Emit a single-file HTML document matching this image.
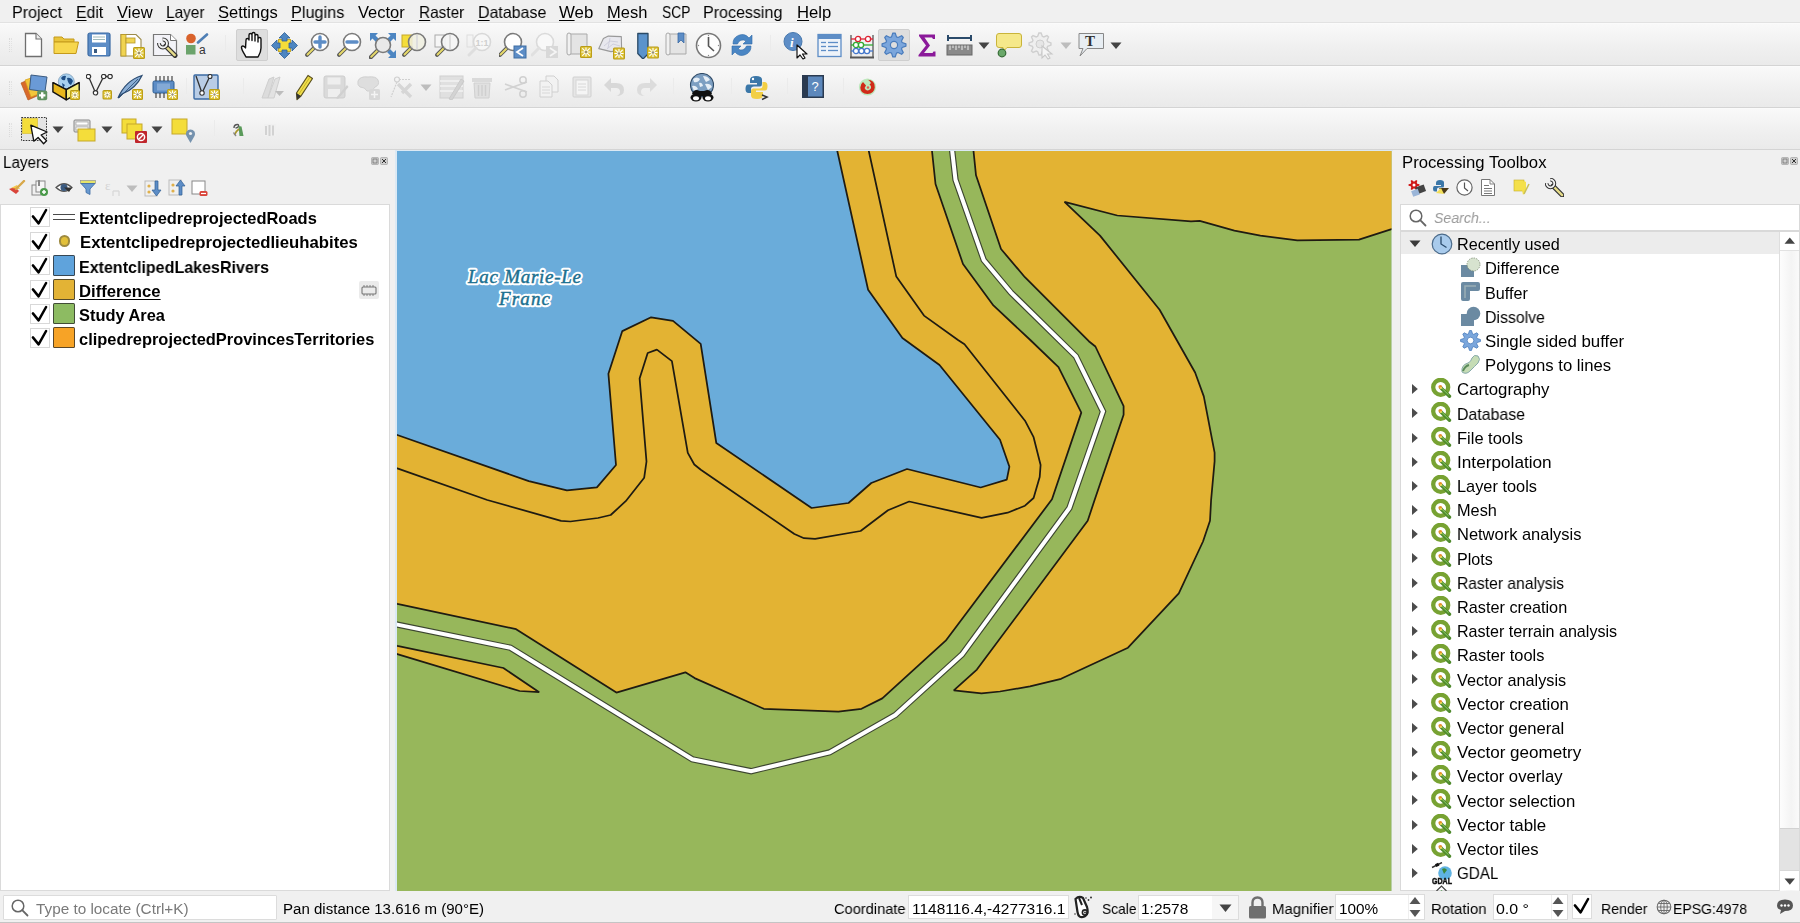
<!DOCTYPE html><html><head><meta charset="utf-8"><style>
html,body{margin:0;padding:0}
body{width:1800px;height:923px;overflow:hidden;position:relative;background:#f0f0f0;font-family:'Liberation Sans',sans-serif;}
div{box-sizing:border-box}
u{text-decoration:underline;text-underline-offset:2px;text-decoration-thickness:1px}
</style></head><body>
<div style="position:absolute;left:0px;top:0px;width:1800px;height:23px;background:#f0f0f0;border-bottom:1px solid #e2e2e2"></div>
<div style="position:absolute;left:11.7px;top:3.93px;font-size:16.5px;line-height:16.5px;color:#000;font-weight:normal;white-space:nowrap;will-change:transform;transform:scaleX(0.9735);transform-origin:0 0;">Project</div>
<div style="position:absolute;left:76px;top:3.93px;font-size:16.5px;line-height:16.5px;color:#000;font-weight:normal;white-space:nowrap;will-change:transform;transform:scaleX(0.9595);transform-origin:0 0;"><u>E</u>dit</div>
<div style="position:absolute;left:116.7px;top:3.93px;font-size:16.5px;line-height:16.5px;color:#000;font-weight:normal;white-space:nowrap;will-change:transform;transform:scaleX(1.0033);transform-origin:0 0;"><u>V</u>iew</div>
<div style="position:absolute;left:165.7px;top:3.93px;font-size:16.5px;line-height:16.5px;color:#000;font-weight:normal;white-space:nowrap;will-change:transform;transform:scaleX(0.9347);transform-origin:0 0;"><u>L</u>ayer</div>
<div style="position:absolute;left:217.7px;top:3.93px;font-size:16.5px;line-height:16.5px;color:#000;font-weight:normal;white-space:nowrap;will-change:transform;transform:scaleX(0.9993);transform-origin:0 0;"><u>S</u>ettings</div>
<div style="position:absolute;left:291px;top:3.93px;font-size:16.5px;line-height:16.5px;color:#000;font-weight:normal;white-space:nowrap;will-change:transform;transform:scaleX(0.9845);transform-origin:0 0;"><u>P</u>lugins</div>
<div style="position:absolute;left:358.3px;top:3.93px;font-size:16.5px;line-height:16.5px;color:#000;font-weight:normal;white-space:nowrap;will-change:transform;transform:scaleX(0.9979);transform-origin:0 0;">Vect<u>o</u>r</div>
<div style="position:absolute;left:419px;top:3.93px;font-size:16.5px;line-height:16.5px;color:#000;font-weight:normal;white-space:nowrap;will-change:transform;transform:scaleX(0.9319);transform-origin:0 0;"><u>R</u>aster</div>
<div style="position:absolute;left:477.7px;top:3.93px;font-size:16.5px;line-height:16.5px;color:#000;font-weight:normal;white-space:nowrap;will-change:transform;transform:scaleX(0.9669);transform-origin:0 0;"><u>D</u>atabase</div>
<div style="position:absolute;left:559px;top:3.93px;font-size:16.5px;line-height:16.5px;color:#000;font-weight:normal;white-space:nowrap;will-change:transform;transform:scaleX(1.0196);transform-origin:0 0;"><u>W</u>eb</div>
<div style="position:absolute;left:607.3px;top:3.93px;font-size:16.5px;line-height:16.5px;color:#000;font-weight:normal;white-space:nowrap;will-change:transform;transform:scaleX(0.9911);transform-origin:0 0;"><u>M</u>esh</div>
<div style="position:absolute;left:661.7px;top:3.93px;font-size:16.5px;line-height:16.5px;color:#000;font-weight:normal;white-space:nowrap;will-change:transform;transform:scaleX(0.8339);transform-origin:0 0;">SCP</div>
<div style="position:absolute;left:703.3px;top:3.93px;font-size:16.5px;line-height:16.5px;color:#000;font-weight:normal;white-space:nowrap;will-change:transform;transform:scaleX(0.9726);transform-origin:0 0;">Pro<u>c</u>essing</div>
<div style="position:absolute;left:796.7px;top:3.93px;font-size:16.5px;line-height:16.5px;color:#000;font-weight:normal;white-space:nowrap;will-change:transform;transform:scaleX(1.0102);transform-origin:0 0;"><u>H</u>elp</div>
<div style="position:absolute;left:0px;top:23px;width:1800px;height:43px;background:linear-gradient(#f9f9f9,#efefef 60%,#eaeaea);border-bottom:1px solid #d4d4d4;border-top:1px solid #fbfbfb"></div>
<div style="position:absolute;left:0px;top:66px;width:1800px;height:42px;background:linear-gradient(#f9f9f9,#efefef 60%,#eaeaea);border-bottom:1px solid #d4d4d4;border-top:1px solid #fbfbfb"></div>
<div style="position:absolute;left:0px;top:108px;width:1800px;height:42px;background:linear-gradient(#f9f9f9,#efefef 60%,#eaeaea);border-bottom:1px solid #d4d4d4;border-top:1px solid #fbfbfb"></div>
<div style="position:absolute;left:9px;top:38px;width:3px;height:14px;border-left:1px dotted #dadada;border-right:1px dotted #e2e2e2"></div>
<div style="position:absolute;left:9px;top:81px;width:3px;height:14px;border-left:1px dotted #dadada;border-right:1px dotted #e2e2e2"></div>
<div style="position:absolute;left:9px;top:123px;width:3px;height:14px;border-left:1px dotted #dadada;border-right:1px dotted #e2e2e2"></div>
<div style="position:absolute;left:236px;top:29px;width:32px;height:32px;background:#dedede;border:1px solid #cfcfcf;border-radius:2px"></div>
<div style="position:absolute;left:878px;top:29px;width:32px;height:32px;background:#dedede;border:1px solid #cfcfcf;border-radius:2px"></div>
<div style="position:absolute;left:24px;top:32px;line-height:0"><svg width="19" height="26" viewBox="0 0 19 26"><path d="M1.5 1.5 H12 L17.5 7 V24.5 H1.5 Z" fill="#fff" stroke="#6f6f6f" stroke-width="1.3"/><path d="M12 1.5 V7 H17.5" fill="#eee" stroke="#6f6f6f" stroke-width="1.1"/></svg></div>
<div style="position:absolute;left:53px;top:34px;line-height:0"><svg width="27" height="21" viewBox="0 0 27 21"><path d="M1 3 H9 L11 5 H21 V8 H1 Z" fill="#e9c43a" stroke="#c49a1c" stroke-width="1"/><path d="M1 8 H25.5 L23 19.5 H1 Z" fill="#f7d74e" stroke="#c49a1c" stroke-width="1"/></svg></div>
<div style="position:absolute;left:87px;top:32px;line-height:0"><svg width="24" height="25" viewBox="0 0 24 25"><rect x="1" y="1" width="22" height="23" rx="2" fill="#5d8dc6" stroke="#3a6aa3" stroke-width="1.2"/><rect x="5" y="2.5" width="14" height="8" fill="#fff"/><g stroke="#8aa" stroke-width="0.8"><line x1="6" y1="5" x2="18" y2="5"/><line x1="6" y1="7.5" x2="18" y2="7.5"/></g><rect x="5" y="15" width="14" height="8" fill="#fff"/><rect x="7" y="17" width="3" height="4" fill="#3a5a80"/></svg></div>
<div style="position:absolute;left:119px;top:33px;line-height:0"><svg width="27" height="26" viewBox="0 0 27 26"><path d="M2 1.5 H17 L22 6.5 V23 H2 Z" fill="#fff" stroke="#9c8b4a" stroke-width="1.1"/><rect x="2" y="1.5" width="5" height="21.5" fill="#f0d452" stroke="#b5962a" stroke-width="0.8"/><rect x="7" y="5" width="9" height="5" fill="#f0d452" stroke="#b5962a" stroke-width="0.8"/><rect x="14" y="14" width="12" height="12" rx="1.5" fill="#b89b18"/><rect x="14.9" y="14.9" width="10.2" height="10.2" rx="1" fill="#dcc236"/><g stroke="#fff" stroke-width="1.15" stroke-linecap="round"><line x1="20.0" y1="15.9" x2="20.0" y2="24.1"/><line x1="15.9" y1="20.0" x2="24.1" y2="20.0"/><line x1="16.6" y1="16.6" x2="23.400000000000002" y2="23.400000000000002"/><line x1="23.400000000000002" y1="16.6" x2="16.6" y2="23.400000000000002"/></g><circle cx="20.0" cy="20.0" r="1.32" fill="#9a9070"/></svg></div>
<div style="position:absolute;left:152px;top:33px;line-height:0"><svg width="27" height="25" viewBox="0 0 27 25"><path d="M1.5 1.5 H18.5 L24.5 7.5 V22.5 H1.5 Z" fill="#f3f3f8" stroke="#777" stroke-width="1.2"/><path d="M18.5 1.5 V7.5 H24.5" fill="#fff" stroke="#777" stroke-width="1"/><g transform="translate(11 10.5) scale(1.05)"><path d="M2.5 2.5 L11.5 11.5" stroke="#333" stroke-width="4.6" stroke-linecap="round"/><path d="M3.2 3.2 L11.1 11.1" stroke="#e6dc8a" stroke-width="2.4" stroke-linecap="round"/><path d="M-0.33 -3.79 A3.8 3.8 0 1 1 -3.79 -0.33" fill="none" stroke="#333" stroke-width="3.8"/><path d="M-0.33 -3.79 A3.8 3.8 0 1 1 -3.79 -0.33" fill="none" stroke="#f4f4f4" stroke-width="1.8"/></g></svg></div>
<div style="position:absolute;left:185px;top:33px;line-height:0"><svg width="24" height="22" viewBox="0 0 24 22"><circle cx="6" cy="5.5" r="4.8" fill="#d9622b"/><line x1="13" y1="9.5" x2="22" y2="1.5" stroke="#4f7fb5" stroke-width="2.6" stroke-linecap="round"/><rect x="1" y="12" width="9.5" height="9.5" fill="#6ba36b"/><text x="14" y="21" font-family="Liberation Sans" font-size="12" fill="#333">a</text></svg></div>
<div style="position:absolute;left:240px;top:31px;line-height:0"><svg width="24" height="28" viewBox="0 0 24 28"><path d="M6 26 C4 22 1.5 19 1.5 16.5 C1.5 14.5 4 14.5 5.5 17 L6 9 C6 7 9 7 9 9 V4 C9 2 12 2 12 4 V9.5 V3 C12 1 15 1 15 3 V10 V5 C15 3 18 3 18 5 V11 V8 C18 6 21 6 21 8 V17 C21 21 19 24 18 26 Z" fill="#fff" stroke="#111" stroke-width="1.4" stroke-linejoin="round"/></svg></div>
<div style="position:absolute;left:271px;top:32px;line-height:0"><svg width="27" height="27" viewBox="0 0 27 27"><rect x="7.5" y="7.5" width="12" height="12" fill="#f4dd3a" stroke="#c5a82a"/><g fill="#4d86c2" stroke="#2f5f94" stroke-width="0.8"><path d="M13.5 0.5 L19 6 H16 V9 H11 V6 H8 Z"/><path d="M13.5 26.5 L19 21 H16 V18 H11 V21 H8 Z"/><path d="M0.5 13.5 L6 8 V11 H9 V16 H6 V19 Z"/><path d="M26.5 13.5 L21 8 V11 H18 V16 H21 V19 Z"/></g></svg></div>
<div style="position:absolute;left:304px;top:32px;line-height:0"><svg width="27" height="27" viewBox="0 0 27 27"><line x1="10.05" y1="15.95" x2="3.0500000000000007" y2="22.95" stroke="#555" stroke-width="4" stroke-linecap="round"/><line x1="10.05" y1="15.95" x2="3.5500000000000007" y2="22.45" stroke="#e6d96a" stroke-width="2" stroke-linecap="round"/><circle cx="16" cy="10" r="8.5" fill="#fff" stroke="#7a7a7a" stroke-width="1.6"/><path d="M16 5 V15 M11 10 H21" stroke="#5d8dc6" stroke-width="3.4" stroke-linecap="round"/></svg></div>
<div style="position:absolute;left:336px;top:32px;line-height:0"><svg width="27" height="27" viewBox="0 0 27 27"><line x1="10.05" y1="15.95" x2="3.0500000000000007" y2="22.95" stroke="#555" stroke-width="4" stroke-linecap="round"/><line x1="10.05" y1="15.95" x2="3.5500000000000007" y2="22.45" stroke="#e6d96a" stroke-width="2" stroke-linecap="round"/><circle cx="16" cy="10" r="8.5" fill="#fff" stroke="#7a7a7a" stroke-width="1.6"/><path d="M11 10 H21" stroke="#5d8dc6" stroke-width="3.4" stroke-linecap="round"/></svg></div>
<div style="position:absolute;left:369px;top:32px;line-height:0"><svg width="28" height="27" viewBox="0 0 28 27"><g fill="#4d86c2"><path d="M1 1 H9 L6.5 3.5 L10 7 L7 10 L3.5 6.5 L1 9 Z"/><path d="M27 1 V9 L24.5 6.5 L21 10 L18 7 L21.5 3.5 L19 1 Z"/><path d="M27 26 H19 L21.5 23.5 L18 20 L21 17 L24.5 20.5 L27 18 Z"/></g><line x1="8.75" y1="18.25" x2="1.75" y2="25.25" stroke="#555" stroke-width="4" stroke-linecap="round"/><line x1="8.75" y1="18.25" x2="2.25" y2="24.75" stroke="#e6d96a" stroke-width="2" stroke-linecap="round"/><circle cx="14" cy="13" r="7.5" fill="#e9e9e9" stroke="#7a7a7a" stroke-width="1.6"/></svg></div>
<div style="position:absolute;left:401px;top:32px;line-height:0"><svg width="28" height="27" viewBox="0 0 28 27"><rect x="1" y="3" width="10" height="12" fill="#f4dd3a" stroke="#c5a82a"/><line x1="10.05" y1="15.95" x2="3.0500000000000007" y2="22.95" stroke="#555" stroke-width="4" stroke-linecap="round"/><line x1="10.05" y1="15.95" x2="3.5500000000000007" y2="22.45" stroke="#e6d96a" stroke-width="2" stroke-linecap="round"/><circle cx="16" cy="10" r="8.5" fill="rgba(240,240,225,0.85)" stroke="#7a7a7a" stroke-width="1.6"/><line x1="16" y1="3" x2="16" y2="17" stroke="#ddd" stroke-width="2"/></svg></div>
<div style="position:absolute;left:434px;top:32px;line-height:0"><svg width="28" height="27" viewBox="0 0 28 27"><rect x="1" y="3" width="10" height="12" fill="#f6f6f6" stroke="#aaa"/><line x1="10.05" y1="15.95" x2="3.0500000000000007" y2="22.95" stroke="#555" stroke-width="4" stroke-linecap="round"/><line x1="10.05" y1="15.95" x2="3.5500000000000007" y2="22.45" stroke="#e6d96a" stroke-width="2" stroke-linecap="round"/><circle cx="16" cy="10" r="8.5" fill="rgba(245,245,245,0.9)" stroke="#7a7a7a" stroke-width="1.6"/><line x1="16" y1="3" x2="16" y2="17" stroke="#ddd" stroke-width="2"/></svg></div>
<div style="position:absolute;left:466px;top:32px;line-height:0"><svg width="27" height="27" viewBox="0 0 27 27"><rect x="1" y="3" width="6" height="12" fill="none" stroke="#ddd"/><circle cx="16" cy="10" r="8.5" fill="#f7f7f7" stroke="#d8d8d8" stroke-width="1.6"/><line x1="10" y1="16" x2="3" y2="23" stroke="#dedede" stroke-width="3" stroke-linecap="round"/><text x="9.5" y="14" font-family="Liberation Sans" font-weight="bold" font-size="9" fill="#cfcfcf">1:1</text></svg></div>
<div style="position:absolute;left:499px;top:32px;line-height:0"><svg width="28" height="27" viewBox="0 0 28 27"><line x1="8.05" y1="15.95" x2="1.0500000000000007" y2="22.95" stroke="#555" stroke-width="4" stroke-linecap="round"/><line x1="8.05" y1="15.95" x2="1.5500000000000007" y2="22.45" stroke="#e6d96a" stroke-width="2" stroke-linecap="round"/><circle cx="14" cy="10" r="8.5" fill="#fff" stroke="#7a7a7a" stroke-width="1.6"/><rect x="15" y="14" width="12" height="12" fill="#5d8dc6" stroke="#3f6ea3"/><path d="M24 16 L18 20 L24 24" fill="none" stroke="#fff" stroke-width="1.8"/></svg></div>
<div style="position:absolute;left:531px;top:32px;line-height:0"><svg width="28" height="27" viewBox="0 0 28 27"><circle cx="14" cy="10" r="8.5" fill="#f8f8f8" stroke="#dadada" stroke-width="1.6"/><line x1="8" y1="16" x2="1" y2="23" stroke="#e0e0e0" stroke-width="3" stroke-linecap="round"/><rect x="15" y="14" width="12" height="12" fill="#d8d8d8"/><path d="M19 16 L25 20 L19 24" fill="none" stroke="#f5f5f5" stroke-width="1.8"/></svg></div>
<div style="position:absolute;left:566px;top:32px;line-height:0"><svg width="27" height="27" viewBox="0 0 27 27"><path d="M3 2 H21 V22 H3 Z" fill="#e4e4e4" stroke="#a9a9a9"/><rect x="1" y="1" width="4" height="22" rx="2" fill="#f1f1f1" stroke="#a9a9a9"/><rect x="14" y="14" width="12" height="12" rx="1.5" fill="#b89b18"/><rect x="14.9" y="14.9" width="10.2" height="10.2" rx="1" fill="#dcc236"/><g stroke="#fff" stroke-width="1.15" stroke-linecap="round"><line x1="20.0" y1="15.9" x2="20.0" y2="24.1"/><line x1="15.9" y1="20.0" x2="24.1" y2="20.0"/><line x1="16.6" y1="16.6" x2="23.400000000000002" y2="23.400000000000002"/><line x1="23.400000000000002" y1="16.6" x2="16.6" y2="23.400000000000002"/></g><circle cx="20.0" cy="20.0" r="1.32" fill="#9a9070"/></svg></div>
<div style="position:absolute;left:598px;top:33px;line-height:0"><svg width="28" height="27" viewBox="0 0 28 27"><path d="M0.8 15.6 L5.4 5.5 L10.3 3.1 L23.3 3.6 L23.6 17 L13 18.6 Z" fill="#e8e8ee" stroke="#999" stroke-width="1.1" stroke-linejoin="round"/><path d="M6 13 L12 8 L20 9 M9 16 L15 11 L22 13 M12 5 L10 15" fill="none" stroke="#c8c8d8" stroke-width="0.8"/><rect x="15" y="14.5" width="12" height="12" rx="1.5" fill="#b89b18"/><rect x="15.9" y="15.4" width="10.2" height="10.2" rx="1" fill="#dcc236"/><g stroke="#fff" stroke-width="1.15" stroke-linecap="round"><line x1="21.0" y1="16.4" x2="21.0" y2="24.6"/><line x1="16.9" y1="20.5" x2="25.1" y2="20.5"/><line x1="17.599999999999998" y1="17.099999999999998" x2="24.400000000000002" y2="23.900000000000002"/><line x1="24.400000000000002" y1="17.099999999999998" x2="17.599999999999998" y2="23.900000000000002"/></g><circle cx="21.0" cy="20.5" r="1.32" fill="#9a9070"/></svg></div>
<div style="position:absolute;left:636px;top:32px;line-height:0"><svg width="24" height="27" viewBox="0 0 24 27"><path d="M1.8 1.5 H12 V22 L7 27 L1.8 21.5 Z" fill="#5b93cc" stroke="#2a4a66" stroke-width="1.3" stroke-linejoin="round"/><rect x="11" y="14.5" width="12" height="12" rx="1.5" fill="#b89b18"/><rect x="11.9" y="15.4" width="10.2" height="10.2" rx="1" fill="#dcc236"/><g stroke="#fff" stroke-width="1.15" stroke-linecap="round"><line x1="17.0" y1="16.4" x2="17.0" y2="24.6"/><line x1="12.9" y1="20.5" x2="21.1" y2="20.5"/><line x1="13.6" y1="17.099999999999998" x2="20.400000000000002" y2="23.900000000000002"/><line x1="20.400000000000002" y1="17.099999999999998" x2="13.6" y2="23.900000000000002"/></g><circle cx="17.0" cy="20.5" r="1.32" fill="#9a9070"/></svg></div>
<div style="position:absolute;left:665px;top:32px;line-height:0"><svg width="24" height="25" viewBox="0 0 24 25"><path d="M3 2 H21 V22 H3 Z" fill="#e4e4e4" stroke="#a9a9a9"/><rect x="1" y="1" width="4" height="22" rx="2" fill="#f1f1f1" stroke="#a9a9a9"/><path d="M13 1 H19 V11 L16 8 L13 11 Z" fill="#5d8dc6" stroke="#3a6aa3" stroke-width="0.8"/></svg></div>
<div style="position:absolute;left:695px;top:32px;line-height:0"><svg width="27" height="27" viewBox="0 0 27 27"><circle cx="13.5" cy="13.5" r="12" fill="#fdfdfd" stroke="#777" stroke-width="1.6"/><path d="M13.5 5 V14 L19 19" fill="none" stroke="#555" stroke-width="1.6"/><g fill="#888"><circle cx="13.5" cy="3.5" r="0.7"/><circle cx="13.5" cy="23.5" r="0.7"/><circle cx="3.5" cy="13.5" r="0.7"/><circle cx="23.5" cy="13.5" r="0.7"/></g></svg></div>
<div style="position:absolute;left:729px;top:32px;line-height:0"><svg width="26" height="26" viewBox="0 0 26 26"><path d="M4 12 A9 9 0 0 1 20 6 L23 3 V12 H14 L17 9 A5.5 5.5 0 0 0 8.5 12 Z" fill="#4a86c4" stroke="#2f6aa8" stroke-width="0.6"/><path d="M22 14 A9 9 0 0 1 6 20 L3 23 V14 H12 L9 17 A5.5 5.5 0 0 0 17.5 14 Z" fill="#4a86c4" stroke="#2f6aa8" stroke-width="0.6"/></svg></div>
<div style="position:absolute;left:783px;top:32px;line-height:0"><svg width="28" height="28" viewBox="0 0 28 28"><circle cx="10" cy="9.5" r="9" fill="#5d8dc6" stroke="#4677ad" stroke-width="1"/><text x="7" y="15" font-family="Liberation Serif" font-style="italic" font-weight="bold" font-size="13" fill="#fff">i</text><path d="M14 13 L14 26 L17 23 L20 27 L22 26 L19.5 22 L24 22 Z" fill="#fff" stroke="#111" stroke-width="1.2" stroke-linejoin="round"/></svg></div>
<div style="position:absolute;left:817px;top:33px;line-height:0"><svg width="26" height="25" viewBox="0 0 26 25"><rect x="1" y="1.5" width="23" height="22" fill="#eef3f9" stroke="#5d8dc6" stroke-width="1.3"/><rect x="1" y="1.5" width="23" height="4.5" fill="#5d8dc6"/><g stroke="#5d8dc6" stroke-width="1.3"><line x1="4" y1="9.5" x2="9" y2="9.5"/><line x1="11" y1="9.5" x2="21" y2="9.5"/><line x1="4" y1="13.5" x2="9" y2="13.5"/><line x1="11" y1="13.5" x2="21" y2="13.5"/><line x1="4" y1="17.5" x2="9" y2="17.5"/><line x1="11" y1="17.5" x2="21" y2="17.5"/></g></svg></div>
<div style="position:absolute;left:849px;top:33px;line-height:0"><svg width="26" height="26" viewBox="0 0 26 26"><g stroke="#555" stroke-width="1.3" fill="none"><line x1="2" y1="2" x2="2" y2="24"/><line x1="24" y1="2" x2="24" y2="24"/><line x1="1" y1="24.5" x2="25" y2="24.5" stroke-width="2"/></g><g stroke-width="1.3" fill="#fff"><line x1="2" y1="6" x2="24" y2="6" stroke="#d23"/><circle cx="9" cy="6" r="2.6" stroke="#d23"/><circle cx="19" cy="6" r="2.6" stroke="#d23"/><line x1="2" y1="12" x2="24" y2="12" stroke="#3a3"/><circle cx="7" cy="12" r="2.6" stroke="#3a3"/><circle cx="12" cy="12" r="2.6" stroke="#3a3"/><line x1="2" y1="18" x2="24" y2="18" stroke="#47c"/><circle cx="7" cy="18" r="2.6" stroke="#47c"/><circle cx="12.5" cy="18" r="2.6" stroke="#47c"/><circle cx="18" cy="18" r="2.6" stroke="#47c"/></g></svg></div>
<div style="position:absolute;left:881px;top:32px;line-height:0"><svg width="26" height="26" viewBox="0 0 26 26"><path d="M24.94 11.82 L24.94 14.18 L21.13 15.47 L20.50 17.01 L22.28 20.61 L20.61 22.28 L17.01 20.50 L15.47 21.13 L14.18 24.94 L11.82 24.94 L10.53 21.13 L8.99 20.50 L5.39 22.28 L3.72 20.61 L5.50 17.01 L4.87 15.47 L1.06 14.18 L1.06 11.82 L4.87 10.53 L5.50 8.99 L3.72 5.39 L5.39 3.72 L8.99 5.50 L10.53 4.87 L11.82 1.06 L14.18 1.06 L15.47 4.87 L17.01 5.50 L20.61 3.72 L22.28 5.39 L20.50 8.99 L21.13 10.53 Z" fill="#7ba6dc" stroke="#4a7cbc" stroke-width="1.2" stroke-linejoin="round"/><circle cx="13" cy="13" r="3.6" fill="#dedede" stroke="#4a7cbc" stroke-width="1.2"/></svg></div>
<div style="position:absolute;left:917px;top:33px;line-height:0"><svg width="20" height="25" viewBox="0 0 20 25"><path d="M2 1.5 H18 V6 H16 L15 4.5 H7.5 L13 12.5 L7 20 H15.5 L16.5 18.5 H18.5 V23.5 H1.5 V22 L9 12.5 L2 3 Z" fill="#8b1a9a"/></svg></div>
<div style="position:absolute;left:946px;top:33px;line-height:0"><svg width="27" height="25" viewBox="0 0 27 25"><rect x="1" y="12" width="25" height="10" fill="#8a8a8a" stroke="#666"/><g stroke="#eee" stroke-width="1"><line x1="4" y1="12.5" x2="4" y2="17"/><line x1="7" y1="12.5" x2="7" y2="15"/><line x1="10" y1="12.5" x2="10" y2="17"/><line x1="13" y1="12.5" x2="13" y2="15"/><line x1="16" y1="12.5" x2="16" y2="17"/><line x1="19" y1="12.5" x2="19" y2="15"/><line x1="22" y1="12.5" x2="22" y2="17"/></g><path d="M2 2 V8 M25 2 V8 M2 5 H25" stroke="#2a4a6a" stroke-width="2"/></svg></div>
<div style="position:absolute;left:978px;top:42px;line-height:0"><svg width="12" height="8" viewBox="0 0 12 8"><path d="M0.5 0.5 H11.5 L6 7 Z" fill="#444"/></svg></div>
<div style="position:absolute;left:996px;top:32px;line-height:0"><svg width="27" height="27" viewBox="0 0 27 27"><path d="M3 1.5 H23 Q25.5 1.5 25.5 4 V13 Q25.5 15.5 23 15.5 H11 L7 20 V15.5 H3 Q0.5 15.5 0.5 13 V4 Q0.5 1.5 3 1.5 Z" fill="#f5e88a" stroke="#c9b43a" stroke-width="1"/><circle cx="6" cy="21" r="3.8" fill="#6aa86a" stroke="#356a35" stroke-width="1.2"/></svg></div>
<div style="position:absolute;left:1028px;top:32px;line-height:0"><svg width="28" height="28" viewBox="0 0 28 28"><path d="M22.95 10.92 L22.95 13.08 L19.66 14.32 L19.06 15.77 L20.50 18.98 L18.98 20.50 L15.77 19.06 L14.32 19.66 L13.08 22.95 L10.92 22.95 L9.68 19.66 L8.23 19.06 L5.02 20.50 L3.50 18.98 L4.94 15.77 L4.34 14.32 L1.05 13.08 L1.05 10.92 L4.34 9.68 L4.94 8.23 L3.50 5.02 L5.02 3.50 L8.23 4.94 L9.68 4.34 L10.92 1.05 L13.08 1.05 L14.32 4.34 L15.77 4.94 L18.98 3.50 L20.50 5.02 L19.06 8.23 L19.66 9.68 Z" fill="#efefef" stroke="#cfcfcf" stroke-width="1.4"/><circle cx="12" cy="12" r="4" fill="#e6e6e6" stroke="#cfcfcf"/><path d="M14 14 L14 26 L17 23 L20 27 L22 26 L19.5 22 L24 22 Z" fill="#f5f5f5" stroke="#c8c8c8" stroke-width="1.1"/></svg></div>
<div style="position:absolute;left:1060px;top:42px;line-height:0"><svg width="12" height="8" viewBox="0 0 12 8"><path d="M0.5 0.5 H11.5 L6 7 Z" fill="#bdbdbd"/></svg></div>
<div style="position:absolute;left:1078px;top:32px;line-height:0"><svg width="27" height="27" viewBox="0 0 27 27"><path d="M1 1.5 H25.5 V16.5 H9 L2 24 L5 16.5 H1 Z" fill="#e8eef3" stroke="#888" stroke-width="1"/><text x="7" y="14" font-family="Liberation Serif" font-weight="bold" font-size="15" fill="#333">T</text></svg></div>
<div style="position:absolute;left:1110px;top:42px;line-height:0"><svg width="12" height="8" viewBox="0 0 12 8"><path d="M0.5 0.5 H11.5 L6 7 Z" fill="#444"/></svg></div>
<div style="position:absolute;left:20px;top:74px;line-height:0"><svg width="29" height="27" viewBox="0 0 29 27"><path d="M1 9 L10 5 L17 22 L8 26 Z" fill="#d8692a" stroke="#b55a20" stroke-width="0.7"/><path d="M5 6 L14 3 L21 19 L11 23 Z" fill="#f3c63a" stroke="#d6a21c" stroke-width="0.7"/><path d="M11 1 L27 3 L25 17.5 L9.5 15.5 Z" fill="#6a9ad6" stroke="#3a5a80" stroke-width="1"/><rect x="17.2" y="16.5" width="10" height="9.8" rx="1.8" fill="#5f9360"/><path d="M22.2 18.3 V24.5 M19 21.4 H25.4" stroke="#fff" stroke-width="2.4"/></svg></div>
<div style="position:absolute;left:52px;top:73px;line-height:0"><svg width="29" height="28" viewBox="0 0 29 28"><circle cx="14.3" cy="8.8" r="8" fill="#a8d0ee" stroke="#6a8aa8" stroke-width="0.6"/><path d="M9 5 Q11 2 14 3 L13 7 Q10 8 9 5 Z M15 5 Q19 4 21 8 L19 12 Q16 11 15 5 Z M10 10 L13 12 L11 15 Z" fill="#1f4f86"/><path d="M0.9 9.6 L14.3 16.6 L27.2 9.6" fill="none" stroke="#111" stroke-width="1.4" stroke-linejoin="round"/><path d="M0.9 9.6 L14.3 16.6 V26.8 L0.9 18.9 Z" fill="#e8b71c" stroke="#111" stroke-width="1.4" stroke-linejoin="round"/><path d="M14.3 16.6 L27.2 9.6 V19.5 L14.3 26.8 Z" fill="#f6ec7a" stroke="#111" stroke-width="1.4" stroke-linejoin="round"/><rect x="18" y="17" width="10" height="10" rx="1.5" fill="#b89b18"/><rect x="18.9" y="17.9" width="8.2" height="8.2" rx="1" fill="#dcc236"/><g stroke="#fff" stroke-width="1.15" stroke-linecap="round"><line x1="23.0" y1="18.9" x2="23.0" y2="25.1"/><line x1="19.9" y1="22.0" x2="26.1" y2="22.0"/><line x1="20.599999999999998" y1="19.599999999999998" x2="25.400000000000002" y2="24.400000000000002"/><line x1="25.400000000000002" y1="19.599999999999998" x2="20.599999999999998" y2="24.400000000000002"/></g><circle cx="23.0" cy="22.0" r="1.1" fill="#9a9070"/></svg></div>
<div style="position:absolute;left:86px;top:74px;line-height:0"><svg width="27" height="26" viewBox="0 0 27 26"><path d="M2.5 2.5 L9.5 18.8 L17.7 2.5 H24.1" fill="none" stroke="#333" stroke-width="1.3"/><g fill="#fff" stroke="#333" stroke-width="1.2"><circle cx="2.5" cy="2.5" r="2.2"/><circle cx="9.5" cy="18.8" r="2.2"/><circle cx="17.7" cy="2.5" r="2.2"/><circle cx="24.1" cy="2.5" r="2.2"/></g><rect x="16.5" y="16" width="9.5" height="9.5" rx="1.5" fill="#b89b18"/><rect x="17.4" y="16.9" width="7.7" height="7.7" rx="1" fill="#dcc236"/><g stroke="#fff" stroke-width="1.15" stroke-linecap="round"><line x1="21.25" y1="17.9" x2="21.25" y2="23.6"/><line x1="18.4" y1="20.75" x2="24.1" y2="20.75"/><line x1="19.099999999999998" y1="18.599999999999998" x2="23.400000000000002" y2="22.900000000000002"/><line x1="23.400000000000002" y1="18.599999999999998" x2="19.099999999999998" y2="22.900000000000002"/></g><circle cx="21.25" cy="20.75" r="1.045" fill="#9a9070"/></svg></div>
<div style="position:absolute;left:117px;top:74px;line-height:0"><svg width="27" height="26" viewBox="0 0 27 26"><path d="M1 24 C6 12 14 5 25 1.5 C22 8 16 16 5 20 Z" fill="#8aaed6" stroke="#2a4a70" stroke-width="1.2"/><path d="M2 24 L21 5" stroke="#2a4a70" stroke-width="0.8"/><rect x="15" y="15" width="11" height="11" rx="1.5" fill="#b89b18"/><rect x="15.9" y="15.9" width="9.2" height="9.2" rx="1" fill="#dcc236"/><g stroke="#fff" stroke-width="1.15" stroke-linecap="round"><line x1="20.5" y1="16.9" x2="20.5" y2="24.1"/><line x1="16.9" y1="20.5" x2="24.1" y2="20.5"/><line x1="17.599999999999998" y1="17.599999999999998" x2="23.400000000000002" y2="23.400000000000002"/><line x1="23.400000000000002" y1="17.599999999999998" x2="17.599999999999998" y2="23.400000000000002"/></g><circle cx="20.5" cy="20.5" r="1.21" fill="#9a9070"/></svg></div>
<div style="position:absolute;left:152px;top:75px;line-height:0"><svg width="27" height="25" viewBox="0 0 27 25"><rect x="1" y="6" width="21" height="12" rx="1.5" fill="#5d8dc6" stroke="#2f5f94"/><rect x="5" y="8.5" width="13" height="7" fill="#83a9d6"/><g stroke="#333" stroke-width="1.1"><path d="M4 1 V6 M8 1 V6 M12 1 V6 M16 1 V6 M20 1 V6 M4 18 V23 M8 18 V23 M12 18 V23"/></g><rect x="15" y="14" width="11" height="11" rx="1.5" fill="#b89b18"/><rect x="15.9" y="14.9" width="9.2" height="9.2" rx="1" fill="#dcc236"/><g stroke="#fff" stroke-width="1.15" stroke-linecap="round"><line x1="20.5" y1="15.9" x2="20.5" y2="23.1"/><line x1="16.9" y1="19.5" x2="24.1" y2="19.5"/><line x1="17.599999999999998" y1="16.6" x2="23.400000000000002" y2="22.400000000000002"/><line x1="23.400000000000002" y1="16.6" x2="17.599999999999998" y2="22.400000000000002"/></g><circle cx="20.5" cy="19.5" r="1.21" fill="#9a9070"/></svg></div>
<div style="position:absolute;left:193px;top:74px;line-height:0"><svg width="28" height="27" viewBox="0 0 28 27"><rect x="1" y="1" width="24" height="24" rx="1" fill="#b9cde6" stroke="#3a6aa3" stroke-width="1.4"/><path d="M3 2 L9 19 L17 2" fill="none" stroke="#333" stroke-width="1.3"/><g fill="#fff" stroke="#333" stroke-width="1.1"><circle cx="9" cy="19" r="2.2"/><circle cx="17" cy="2.5" r="2"/></g><rect x="16" y="15" width="11" height="11" rx="1.5" fill="#b89b18"/><rect x="16.9" y="15.9" width="9.2" height="9.2" rx="1" fill="#dcc236"/><g stroke="#fff" stroke-width="1.15" stroke-linecap="round"><line x1="21.5" y1="16.9" x2="21.5" y2="24.1"/><line x1="17.9" y1="20.5" x2="25.1" y2="20.5"/><line x1="18.599999999999998" y1="17.599999999999998" x2="24.400000000000002" y2="23.400000000000002"/><line x1="24.400000000000002" y1="17.599999999999998" x2="18.599999999999998" y2="23.400000000000002"/></g><circle cx="21.5" cy="20.5" r="1.21" fill="#9a9070"/></svg></div>
<div style="position:absolute;left:259px;top:74px;line-height:0"><svg width="27" height="26" viewBox="0 0 27 26"><path d="M3 24 L10 5 L15 3 L9 24 Z" fill="#dcdcdc" stroke="#cfcfcf"/><path d="M9 24 L16 5 L21 3 L15 24 Z" fill="#e2e2e2" stroke="#cfcfcf"/><path d="M16 17 H25 L20.5 22 Z" fill="#bdbdbd"/></svg></div>
<div style="position:absolute;left:294px;top:74px;line-height:0"><svg width="19" height="27" viewBox="0 0 19 27"><path d="M3 25.5 L2.5 19 L14 1.5 L18.5 4.5 L7 22 Z" fill="#f0de4a" stroke="#5a5020" stroke-width="1.2" stroke-linejoin="round"/><path d="M2.5 19 L7 22 L3 25.5 Z" fill="#333"/><path d="M5 20 L16 3" stroke="#c9b42a" stroke-width="1"/></svg></div>
<div style="position:absolute;left:323px;top:75px;line-height:0"><svg width="26" height="25" viewBox="0 0 26 25"><rect x="1" y="1" width="21" height="22" rx="2" fill="#dadada" stroke="#cdcdcd"/><rect x="4.5" y="2.5" width="13" height="7" fill="#eee"/><rect x="5" y="14" width="12" height="8" fill="#eee"/><path d="M13 23 L24 10 L25.5 12 L15 24 Z" fill="#d0d0d0"/></svg></div>
<div style="position:absolute;left:356px;top:75px;line-height:0"><svg width="26" height="26" viewBox="0 0 26 26"><path d="M2 6 Q4 1 12 2 Q20 1 22 5 Q24 10 19 12 Q17 13 18 16 H11 Q9 12 4 12 Q1 10 2 6 Z" fill="#dedede" stroke="#d0d0d0"/><rect x="13" y="14" width="11" height="11" rx="1.5" fill="#d8d8d8"/><path d="M18.5 16 V23 M15 19.5 H22" stroke="#f4f4f4" stroke-width="1.5"/></svg></div>
<div style="position:absolute;left:390px;top:76px;line-height:0"><svg width="24" height="23" viewBox="0 0 24 23"><circle cx="7" cy="3.5" r="2.5" fill="none" stroke="#cfcfcf" stroke-width="1.2"/><path d="M7 6 L1 21 M9 3.5 H20" stroke="#d0d0d0" stroke-width="1.2" stroke-dasharray="2 1"/><path d="M8 8 L21 21 M21 8 L12 17" stroke="#d6d6d6" stroke-width="3.4"/></svg></div>
<div style="position:absolute;left:420px;top:84px;line-height:0"><svg width="12" height="8" viewBox="0 0 12 8"><path d="M0.5 0.5 H11.5 L6 7 Z" fill="#bdbdbd"/></svg></div>
<div style="position:absolute;left:439px;top:75px;line-height:0"><svg width="26" height="25" viewBox="0 0 26 25"><rect x="1" y="1" width="23" height="22" fill="#e0e0e0" stroke="#d0d0d0"/><g stroke="#f3f3f3" stroke-width="1.5"><line x1="1" y1="6" x2="24" y2="6"/><line x1="1" y1="11" x2="24" y2="11"/><line x1="1" y1="16" x2="24" y2="16"/></g><path d="M10 24 L22 4 L25 6 L13 25 Z" fill="#d3d3d3" stroke="#c6c6c6" stroke-width="0.8"/></svg></div>
<div style="position:absolute;left:471px;top:76px;line-height:0"><svg width="22" height="23" viewBox="0 0 22 23"><rect x="1" y="2" width="20" height="4" fill="#dadada"/><path d="M3 7 H19 L18 22 H4 Z" fill="#e0e0e0" stroke="#d0d0d0"/><path d="M7.5 9 V20 M11 9 V20 M14.5 9 V20" stroke="#cfcfcf" stroke-width="1.5"/></svg></div>
<div style="position:absolute;left:503px;top:75px;line-height:0"><svg width="26" height="24" viewBox="0 0 26 24"><path d="M2 9 L24 17 M2 15 L24 7" stroke="#d2d2d2" stroke-width="1.6"/><circle cx="20" cy="5" r="3.2" fill="none" stroke="#d0d0d0" stroke-width="1.5"/><circle cx="20" cy="19" r="3.2" fill="none" stroke="#d0d0d0" stroke-width="1.5"/></svg></div>
<div style="position:absolute;left:539px;top:75px;line-height:0"><svg width="20" height="23" viewBox="0 0 20 23"><path d="M7 1 H15 L19 5 V17 H7 Z" fill="#f2f2f2" stroke="#d0d0d0"/><path d="M1 6 H9 L13 10 V22 H1 Z" fill="#f2f2f2" stroke="#d0d0d0"/><g stroke="#d8d8d8"><line x1="3" y1="12" x2="11" y2="12"/><line x1="3" y1="15" x2="11" y2="15"/><line x1="3" y1="18" x2="11" y2="18"/></g></svg></div>
<div style="position:absolute;left:572px;top:75px;line-height:0"><svg width="20" height="23" viewBox="0 0 20 23"><rect x="1" y="2" width="18" height="20" rx="1" fill="#e6e6e6" stroke="#d0d0d0"/><rect x="4" y="5" width="12" height="15" fill="#f5f5f5" stroke="#d6d6d6"/><g stroke="#d8d8d8"><line x1="6" y1="9" x2="14" y2="9"/><line x1="6" y1="12" x2="14" y2="12"/><line x1="6" y1="15" x2="14" y2="15"/></g></svg></div>
<div style="position:absolute;left:603px;top:77px;line-height:0"><svg width="22" height="20" viewBox="0 0 22 20"><path d="M8 1 L1 8 L8 15 V11 H13 Q17 11 17 15 Q17 18 13 19 Q21 19 21 13 Q21 6 13 6 H8 Z" fill="#d8d8d8"/></svg></div>
<div style="position:absolute;left:636px;top:77px;line-height:0"><svg width="22" height="20" viewBox="0 0 22 20"><path d="M14 1 L21 8 L14 15 V11 H9 Q5 11 5 15 Q5 18 9 19 Q1 19 1 13 Q1 6 9 6 H14 Z" fill="#dcdcdc"/></svg></div>
<div style="position:absolute;left:688px;top:73px;line-height:0"><svg width="29" height="29" viewBox="0 0 29 29"><circle cx="14" cy="12" r="11.5" fill="#7d9fc2" stroke="#2f4a66" stroke-width="1.1"/><path d="M5 6 Q9 3 12 6 Q10 10 6 9 Z M15 3 Q20 3 22 7 L18 9 Q16 6 15 3 Z M4 13 Q8 12 10 16 L6 18 Z M17 11 Q22 10 24 14 L20 17 Z M11 10 Q14 9 15 13 L12 14 Z" fill="#e6eef6"/><g fill="#111"><path d="M4 21 Q5 17 9 17 L12 18 V22 Z"/><path d="M24 21 Q23 17 19 17 L16 18 V22 Z"/><ellipse cx="8" cy="24.5" rx="5.5" ry="4"/><ellipse cx="20" cy="24.5" rx="5.5" ry="4"/><rect x="11" y="18" width="6" height="5"/></g><g fill="#fff"><ellipse cx="8" cy="25.2" rx="3" ry="2"/><ellipse cx="20" cy="25.2" rx="3" ry="2"/></g></svg></div>
<div style="position:absolute;left:745px;top:75px;line-height:0"><svg width="26" height="26" viewBox="0 0 26 26"><path d="M11 1 Q5 1 5 5 V8 H12 V9.5 H3 Q0.5 9.5 0.5 14 Q0.5 18 3.5 18 H6 V14 Q6 11.5 9 11.5 H15 Q17 11.5 17 9 V4.5 Q17 1 11 1 Z" fill="#3b77a8"/><circle cx="8" cy="4" r="1.2" fill="#fff"/><path d="M12 24 Q18 24 18 20 V17 H11 V15.5 H20 Q22.5 15.5 22.5 11 Q22.5 7 19.5 7 H17.5 V11 Q17.5 13.5 14.5 13.5 H8 Q6 13.5 6 16 V20.5 Q6 24 12 24 Z" fill="#f2cf45"/><path d="M17 20 L22 22 L17 24.5" fill="none" stroke="#333" stroke-width="1.5"/></svg></div>
<div style="position:absolute;left:801px;top:74px;line-height:0"><svg width="24" height="25" viewBox="0 0 24 25"><rect x="1" y="1" width="22" height="23" fill="#2a3a50"/><rect x="7" y="2.5" width="14.5" height="20" fill="#5d88bc"/><text x="10.5" y="17" font-family="Liberation Sans" font-size="13" fill="#fff">?</text></svg></div>
<div style="position:absolute;left:858px;top:78px;line-height:0"><svg width="19" height="18" viewBox="0 0 19 18"><circle cx="9.5" cy="9" r="8.6" fill="#8fe08f" opacity="0.55"/><path d="M9.5 1.8 Q17 1.8 16.8 9.5 Q16 16 9.5 16 Q2.5 16 2.3 9.5 Q2.3 6 5 4 L8 7.5 Q6 9.5 7.5 11.5 Q10 13.5 12.5 11 Q14 8.5 11.5 6.5 L13 5 Q11 1.8 9.5 1.8 Z" fill="#d02a18"/><circle cx="10" cy="9.5" r="1.2" fill="#e85a4a"/></svg></div>
<div style="position:absolute;left:20px;top:116px;line-height:0"><svg width="30" height="30" viewBox="0 0 30 30"><rect x="1.5" y="1.5" width="25" height="23" fill="#e4e4e4" stroke="#333" stroke-width="1" stroke-dasharray="1.6 1.2"/><rect x="2.5" y="2.5" width="15" height="15" fill="#f4dd3a" stroke="#d6b92a" stroke-width="0.6"/><path d="M10.8 9.2 L13.8 25.2 L18.1 21.5 L23.6 27.7 L26.6 24.7 L21.1 19.0 L27.1 16.0 Z" fill="#fff" stroke="#111" stroke-width="1.3" stroke-linejoin="round"/></svg></div>
<div style="position:absolute;left:52px;top:126px;line-height:0"><svg width="12" height="8" viewBox="0 0 12 8"><path d="M0.5 0.5 H11.5 L6 7 Z" fill="#444"/></svg></div>
<div style="position:absolute;left:73px;top:119px;line-height:0"><svg width="23" height="23" viewBox="0 0 23 23"><rect x="1" y="1" width="16" height="12" rx="1" fill="#dcdcdc" stroke="#888"/><rect x="3" y="3" width="12" height="3" fill="#fff" stroke="#999" stroke-width="0.6"/><rect x="3" y="8" width="12" height="3" fill="#fff" stroke="#999" stroke-width="0.6"/><rect x="5" y="10" width="17" height="12" fill="#f4dd3a" stroke="#c5a82a"/></svg></div>
<div style="position:absolute;left:101px;top:126px;line-height:0"><svg width="12" height="8" viewBox="0 0 12 8"><path d="M0.5 0.5 H11.5 L6 7 Z" fill="#444"/></svg></div>
<div style="position:absolute;left:121px;top:118px;line-height:0"><svg width="27" height="26" viewBox="0 0 27 26"><rect x="1" y="1" width="14" height="14" fill="#f4dd3a" stroke="#c5a82a"/><rect x="6" y="6" width="15" height="15" fill="#f4dd3a" stroke="#c5a82a"/><rect x="14" y="13" width="12" height="12" rx="1" fill="#c0262c"/><circle cx="20" cy="19" r="3.6" fill="none" stroke="#fff" stroke-width="1.5"/><line x1="17.5" y1="21.5" x2="22.5" y2="16.5" stroke="#fff" stroke-width="1.5"/></svg></div>
<div style="position:absolute;left:151px;top:126px;line-height:0"><svg width="12" height="8" viewBox="0 0 12 8"><path d="M0.5 0.5 H11.5 L6 7 Z" fill="#444"/></svg></div>
<div style="position:absolute;left:171px;top:118px;line-height:0"><svg width="25" height="26" viewBox="0 0 25 26"><rect x="1" y="1" width="15" height="15" fill="#f4dd3a" stroke="#c5a82a"/><path d="M19.5 25 L15.5 18 A4.5 4.5 0 1 1 23.5 18 Z" fill="#7592ae"/><circle cx="19.5" cy="15.5" r="1.6" fill="#f0f0f0"/></svg></div>
<div style="position:absolute;left:231.5px;top:122.5px;line-height:0"><svg width="13" height="14" viewBox="0 0 13 14"><path d="M2 5 Q2 1.5 5.5 1.5 Q7 1.5 6.5 3.5 Q5.5 5 3.5 5" fill="none" stroke="#555" stroke-width="1.4"/><path d="M6.5 3 L9.5 3.5 L11.5 13 L7.5 13 Z" fill="#5a9a5a"/><path d="M2.5 12 Q4 8 7 6" stroke="#a8962a" stroke-width="1.6" fill="none"/><path d="M1.5 9.5 L4 13" stroke="#888" stroke-width="1.3"/></svg></div>
<div style="position:absolute;left:263px;top:122.5px;line-height:0"><svg width="14" height="14" viewBox="0 0 14 14"><rect x="1" y="1" width="12" height="12" fill="#f0f0f0"/><path d="M3 3 V12 M6.5 2 V13 M10 2.5 V12.5" stroke="#d2d2d2" stroke-width="2"/></svg></div>
<div style="position:absolute;left:225px;top:35px;width:1px;height:16px;background:#ebebeb"></div>
<div style="position:absolute;left:770px;top:35px;width:1px;height:16px;background:#ebebeb"></div>
<div style="position:absolute;left:186px;top:78px;width:1px;height:16px;background:#ebebeb"></div>
<div style="position:absolute;left:243px;top:78px;width:1px;height:16px;background:#ebebeb"></div>
<div style="position:absolute;left:673px;top:78px;width:1px;height:16px;background:#ebebeb"></div>
<div style="position:absolute;left:731px;top:78px;width:1px;height:16px;background:#ebebeb"></div>
<div style="position:absolute;left:787px;top:78px;width:1px;height:16px;background:#ebebeb"></div>
<div style="position:absolute;left:843px;top:78px;width:1px;height:16px;background:#ebebeb"></div>
<div style="position:absolute;left:214px;top:120px;width:1px;height:16px;background:#ebebeb"></div>
<div style="position:absolute;left:2.8px;top:154.76px;font-size:16px;line-height:16px;color:#000;font-weight:normal;white-space:nowrap;will-change:transform;transform:scaleX(0.9515);transform-origin:0 0;">Layers</div>
<div style="position:absolute;left:371px;top:157px;line-height:0"><svg width="8" height="8" viewBox="0 0 8 8"><rect x="0.5" y="0.5" width="7" height="7" rx="1" fill="#cfcfcf" stroke="#999" stroke-width="0.6"/><rect x="2" y="2" width="4" height="4" fill="none" stroke="#666" stroke-width="0.7"/></svg></div>
<div style="position:absolute;left:380px;top:157px;line-height:0"><svg width="8" height="8" viewBox="0 0 8 8"><rect x="0.5" y="0.5" width="7" height="7" rx="1" fill="#cfcfcf" stroke="#999" stroke-width="0.6"/><path d="M2 2 L6 6 M6 2 L2 6" stroke="#333" stroke-width="1"/></svg></div>
<div style="position:absolute;left:8px;top:180px;line-height:0"><svg width="18" height="15" viewBox="0 0 18 15"><path d="M1 9 L7 7 L11 11 L8 14 Z" fill="#d9443a"/><path d="M3 8 L9 5 L12 9" fill="#f5c84a"/><path d="M8 9 L16 1" stroke="#d8a84a" stroke-width="2.4" stroke-linecap="round"/></svg></div>
<div style="position:absolute;left:31px;top:179px;line-height:0"><svg width="18" height="18" viewBox="0 0 18 18"><rect x="1" y="6" width="9" height="10" fill="none" stroke="#888"/><rect x="5" y="2" width="9" height="11" fill="#f6f6f6" stroke="#888"/><path d="M8 1 V7" stroke="#888" stroke-width="2"/><circle cx="13" cy="13" r="4" fill="#4a9a4a"/><path d="M13 11 V15 M11 13 H15" stroke="#fff" stroke-width="1.5"/></svg></div>
<div style="position:absolute;left:55px;top:181px;line-height:0"><svg width="18" height="13" viewBox="0 0 18 13"><path d="M1 6.5 Q9 -1 17 6.5 Q9 14 1 6.5 Z" fill="#fff" stroke="#555" stroke-width="1.2"/><circle cx="9" cy="6.5" r="3.5" fill="#3a5a80"/><path d="M9 6.5 L17 6.5 L14 11 Z" fill="#333"/></svg></div>
<div style="position:absolute;left:80px;top:180px;line-height:0"><svg width="16" height="15" viewBox="0 0 16 15"><rect x="0.5" y="0.5" width="15" height="3" fill="#e6e46a" stroke="#888" stroke-width="0.6"/><path d="M1 3.5 H15 L10 9 V14.5 L6 12.5 V9 Z" fill="#6a9ad0" stroke="#3a6aa3" stroke-width="0.8"/></svg></div>
<div style="position:absolute;left:104px;top:179px;line-height:0"><svg width="18" height="18" viewBox="0 0 18 18"><text x="1" y="11" font-family="Liberation Serif" font-size="13" fill="#d4d4d4">ε</text><path d="M9 12 V17 M15 12 V17 M9 12 H15" stroke="#dadada" stroke-width="1.4"/></svg></div>
<div style="position:absolute;left:126px;top:185px;line-height:0"><svg width="12" height="8" viewBox="0 0 12 8"><path d="M0.5 0.5 H11.5 L6 7 Z" fill="#bdbdbd"/></svg></div>
<div style="position:absolute;left:144px;top:180px;line-height:0"><svg width="18" height="17" viewBox="0 0 18 17"><rect x="1" y="1" width="12" height="15" fill="none" stroke="#bbb"/><circle cx="5" cy="6" r="1.6" fill="#e0b04a"/><circle cx="5" cy="12" r="1.6" fill="#e0b04a"/><path d="M11 1 H14 V10 H17 L12.5 16 L8 10 H11 Z" fill="#5d8dc6" stroke="#2f5f94" stroke-width="0.7"/></svg></div>
<div style="position:absolute;left:168px;top:179px;line-height:0"><svg width="18" height="17" viewBox="0 0 18 17"><rect x="1" y="1" width="12" height="15" fill="none" stroke="#bbb"/><circle cx="5" cy="6" r="1.6" fill="#e0b04a"/><circle cx="5" cy="12" r="1.6" fill="#e0b04a"/><path d="M11 16 H14 V7 H17 L12.5 1 L8 7 H11 Z" fill="#5d8dc6" stroke="#2f5f94" stroke-width="0.7"/></svg></div>
<div style="position:absolute;left:191px;top:180px;line-height:0"><svg width="17" height="17" viewBox="0 0 17 17"><rect x="1" y="1" width="13" height="13" fill="#fff" stroke="#888"/><rect x="8.5" y="11" width="8" height="5" rx="1.5" fill="#d9443a"/><path d="M10 13.5 H15" stroke="#fff" stroke-width="1.2"/></svg></div>
<div style="position:absolute;left:0px;top:204px;width:389.5px;height:687px;background:#fff;border:1px solid #dadada"></div>
<div style="position:absolute;left:30.4px;top:207.29999999999998px;width:19.4px;height:19.6px;background:#fff;border:1px solid #d8d8d8"></div>
<div style="position:absolute;left:30.4px;top:207.29999999999998px;line-height:0"><svg width="19" height="19" viewBox="0 0 19 19"><path d="M2.9 9.4 L8.6 16.4 L16.1 3" fill="none" stroke="#000" stroke-width="2.5" stroke-linecap="round" stroke-linejoin="round"/></svg></div>
<div style="position:absolute;left:53.3px;top:213.7px;width:21.5px;height:1.3px;background:#4a4a4a"></div>
<div style="position:absolute;left:53.3px;top:218.79999999999998px;width:21.5px;height:1.3px;background:#4a4a4a"></div>
<div style="position:absolute;left:79.2px;top:210.22px;font-size:16.4px;line-height:16.4px;color:#000;font-weight:bold;white-space:nowrap;will-change:transform;transform:scaleX(1.0041);transform-origin:0 0;">ExtentclipedreprojectedRoads</div>
<div style="position:absolute;left:30.4px;top:231.49999999999997px;width:19.4px;height:19.6px;background:#fff;border:1px solid #d8d8d8"></div>
<div style="position:absolute;left:30.4px;top:231.49999999999997px;line-height:0"><svg width="19" height="19" viewBox="0 0 19 19"><path d="M2.9 9.4 L8.6 16.4 L16.1 3" fill="none" stroke="#000" stroke-width="2.5" stroke-linecap="round" stroke-linejoin="round"/></svg></div>
<div style="position:absolute;left:59.1px;top:235.2px;width:11.4px;height:11.4px;background:#e2c03a;border:2px solid #9e8a40;border-radius:50%"></div>
<div style="position:absolute;left:80px;top:234.42px;font-size:16.4px;line-height:16.4px;color:#000;font-weight:bold;white-space:nowrap;will-change:transform;transform:scaleX(1.0200);transform-origin:0 0;">Extentclipedreprojectedlieuhabites</div>
<div style="position:absolute;left:30.4px;top:255.69999999999996px;width:19.4px;height:19.6px;background:#fff;border:1px solid #d8d8d8"></div>
<div style="position:absolute;left:30.4px;top:255.69999999999996px;line-height:0"><svg width="19" height="19" viewBox="0 0 19 19"><path d="M2.9 9.4 L8.6 16.4 L16.1 3" fill="none" stroke="#000" stroke-width="2.5" stroke-linecap="round" stroke-linejoin="round"/></svg></div>
<div style="position:absolute;left:53.1px;top:254.49999999999997px;width:21.7px;height:21.4px;background:#5fa3dc;border:1px solid rgba(40,40,40,0.75);border-radius:1.5px"></div>
<div style="position:absolute;left:79.2px;top:258.62px;font-size:16.4px;line-height:16.4px;color:#000;font-weight:bold;white-space:nowrap;will-change:transform;transform:scaleX(0.9791);transform-origin:0 0;">ExtentclipedLakesRivers</div>
<div style="position:absolute;left:30.4px;top:279.9px;width:19.4px;height:19.6px;background:#fff;border:1px solid #d8d8d8"></div>
<div style="position:absolute;left:30.4px;top:279.9px;line-height:0"><svg width="19" height="19" viewBox="0 0 19 19"><path d="M2.9 9.4 L8.6 16.4 L16.1 3" fill="none" stroke="#000" stroke-width="2.5" stroke-linecap="round" stroke-linejoin="round"/></svg></div>
<div style="position:absolute;left:53.1px;top:278.69999999999993px;width:21.7px;height:21.4px;background:#e3b335;border:1px solid rgba(40,40,40,0.75);border-radius:1.5px"></div>
<div style="position:absolute;left:79.2px;top:282.82px;font-size:16.4px;line-height:16.4px;color:#000;font-weight:bold;white-space:nowrap;will-change:transform;transform:scaleX(1.0178);transform-origin:0 0;"><u>Difference</u></div>
<div style="position:absolute;left:30.4px;top:304.1px;width:19.4px;height:19.6px;background:#fff;border:1px solid #d8d8d8"></div>
<div style="position:absolute;left:30.4px;top:304.1px;line-height:0"><svg width="19" height="19" viewBox="0 0 19 19"><path d="M2.9 9.4 L8.6 16.4 L16.1 3" fill="none" stroke="#000" stroke-width="2.5" stroke-linecap="round" stroke-linejoin="round"/></svg></div>
<div style="position:absolute;left:53.1px;top:302.9px;width:21.7px;height:21.4px;background:#8dbb62;border:1px solid rgba(40,40,40,0.75);border-radius:1.5px"></div>
<div style="position:absolute;left:78.8px;top:307.02px;font-size:16.4px;line-height:16.4px;color:#000;font-weight:bold;white-space:nowrap;will-change:transform;transform:scaleX(0.9949);transform-origin:0 0;">Study Area</div>
<div style="position:absolute;left:30.4px;top:328.3px;width:19.4px;height:19.6px;background:#fff;border:1px solid #d8d8d8"></div>
<div style="position:absolute;left:30.4px;top:328.3px;line-height:0"><svg width="19" height="19" viewBox="0 0 19 19"><path d="M2.9 9.4 L8.6 16.4 L16.1 3" fill="none" stroke="#000" stroke-width="2.5" stroke-linecap="round" stroke-linejoin="round"/></svg></div>
<div style="position:absolute;left:53.1px;top:327.09999999999997px;width:21.7px;height:21.4px;background:#f7a326;border:1px solid rgba(40,40,40,0.75);border-radius:1.5px"></div>
<div style="position:absolute;left:78.8px;top:331.22px;font-size:16.4px;line-height:16.4px;color:#000;font-weight:bold;white-space:nowrap;will-change:transform;transform:scaleX(1.0015);transform-origin:0 0;">clipedreprojectedProvincesTerritories</div>
<div style="position:absolute;left:359px;top:281px;line-height:0"><svg width="20" height="18" viewBox="0 0 20 18"><rect x="0" y="0" width="20" height="18" rx="2" fill="#ebebeb"/><rect x="3" y="6" width="14" height="7" rx="1" fill="none" stroke="#777" stroke-width="1.1"/><path d="M5 4 V6 M8 4 V6 M11 4 V6 M14 4 V6 M5 13 V15 M8 13 V15 M11 13 V15 M14 13 V15" stroke="#777" stroke-width="0.9"/></svg></div>
<div style="position:absolute;left:395px;top:150px;width:998px;height:742px;background:#dbe9f4"></div>
<svg style="position:absolute;left:0;top:0" width="1800" height="923" viewBox="0 0 1800 923">
<defs><clipPath id="mc"><rect x="397" y="151" width="994.5" height="740"/></clipPath></defs>
<g clip-path="url(#mc)">
<rect x="397" y="151" width="995" height="740" fill="#97b75b"/>
<polygon points="390.0,140.0 932.0,140.0 932.0,151.0 935.5,184.0 963.0,264.0 993.4,305.4 1030.3,340.0 1058.5,367.1 1081.3,412.6 1052.0,499.3 945.7,640.7 882.3,698.4 861.5,708.8 838.4,711.6 763.8,708.8 694.6,678.1 685.4,672.3 616.4,692.6 516.1,629.2 397.3,603.8 390.0,602.0" fill="#e3b333" stroke="#1f1b12" stroke-width="1.75" stroke-linejoin="bevel"/>
<polygon points="973.5,140.0 973.5,151.0 976.0,175.3 1001.0,249.0 1024.9,277.2 1088.8,341.2 1095.4,346.5 1123.6,406.1 1123.6,414.8 1094.6,500.0 1087.7,520.8 976.9,669.6 953.8,690.4 981.5,693.4 1000.0,691.5 1030.0,686.4 1061.1,678.8 1128.0,647.7 1178.8,593.4 1203.0,541.5 1210.0,520.8 1211.1,500.0 1214.6,461.4 1214.6,452.7 1203.8,396.4 1195.1,372.5 1176.7,340.0 1159.6,309.8 1100.0,235.6 1064.5,201.8 1117.3,215.5 1191.0,221.3 1199.7,220.9 1234.4,230.6 1260.4,235.6 1297.3,240.4 1359.0,239.7 1391.6,229.1 1400.0,226.0 1400.0,140.0" fill="#e3b333" stroke="#1f1b12" stroke-width="1.75" stroke-linejoin="bevel"/>
<polygon points="390.0,644.0 397.3,645.8 503.4,668.0 539.2,692.2 519.6,691.0 397.3,654.1 390.0,652.0" fill="#e3b333" stroke="#1f1b12" stroke-width="1.75" stroke-linejoin="bevel"/>
<polyline points="868.8,145.0 868.8,151.0 896.3,276.6 924.0,315.6 958.0,340.0 964.5,344.3 1025.0,420.7 1033.6,437.2 1040.6,465.0 1039.7,477.1 1033.6,498.0 1025.0,505.7 1007.6,512.7 981.6,517.9 909.2,501.5 888.0,510.2 860.6,531.0 815.1,538.8 804.0,538.2 794.4,534.0 700.8,469.7 694.3,464.5 687.8,452.8 671.9,361.1 656.9,349.6 647.7,353.0 639.6,378.4 646.5,461.5 644.2,477.7 625.7,501.2 610.7,515.0 598.0,518.0 570.4,521.5 561.1,520.8 487.3,500.0 397.3,468.4 390.0,466.0" fill="none" stroke="#1f1b12" stroke-width="1.75" stroke-linejoin="bevel"/>
<polygon points="385.0,140.0 837.3,140.0 837.3,151.0 868.1,289.8 902.4,338.0 939.5,365.0 1000.0,439.7 1009.4,466.7 1006.8,479.7 980.7,487.5 907.0,469.0 871.3,483.0 848.5,503.0 811.6,508.0 716.3,443.0 700.7,343.8 673.0,320.8 651.1,317.3 622.3,331.1 608.4,373.8 616.0,465.0 596.9,487.4 566.9,490.4 528.8,481.1 397.3,435.0 385.0,431.0" fill="#6aacda" stroke="#1f1b12" stroke-width="1.75" stroke-linejoin="bevel"/>
<polyline points="952.2,140.0 952.2,151.0 955.5,179.7 983.7,260.0 1010.8,292.4 1075.9,356.3 1103.0,411.5 1069.4,508.0 961.9,654.6 895.3,715.0 829.6,752.4 751.1,771.2 692.3,759.3 510.4,647.7 397.3,624.6 390.0,623.0" fill="none" stroke="#3c4530" stroke-width="6.3" stroke-linejoin="miter"/>
<polyline points="952.2,140.0 952.2,151.0 955.5,179.7 983.7,260.0 1010.8,292.4 1075.9,356.3 1103.0,411.5 1069.4,508.0 961.9,654.6 895.3,715.0 829.6,752.4 751.1,771.2 692.3,759.3 510.4,647.7 397.3,624.6 390.0,623.0" fill="none" stroke="#ffffff" stroke-width="4" stroke-linejoin="miter"/>
<g font-family="Liberation Serif" font-style="italic" font-size="19" stroke-linejoin="round">
<text x="468" y="283" textLength="113" lengthAdjust="spacing" fill="#fff" stroke="#fff" stroke-width="4.4">Lac Marie-Le</text>
<text x="468" y="283" textLength="113" lengthAdjust="spacing" fill="#1b7090" stroke="#1b7090" stroke-width="0.45">Lac Marie-Le</text>
<text x="499" y="304.5" textLength="51" lengthAdjust="spacing" fill="#fff" stroke="#fff" stroke-width="4.4">Franc</text>
<text x="499" y="304.5" textLength="51" lengthAdjust="spacing" fill="#1b7090" stroke="#1b7090" stroke-width="0.45">Franc</text>
</g>
</g>
</svg>
<div style="position:absolute;left:1391.5px;top:151px;width:5px;height:740px;background:#f0f0f0"></div>
<div style="position:absolute;left:1402.4px;top:153.83px;font-size:16.5px;line-height:16.5px;color:#000;font-weight:normal;white-space:nowrap;will-change:transform;transform:scaleX(1.0120);transform-origin:0 0;">Processing Toolbox</div>
<div style="position:absolute;left:1781px;top:157px;line-height:0"><svg width="8" height="8" viewBox="0 0 8 8"><rect x="0.5" y="0.5" width="7" height="7" rx="1" fill="#cfcfcf" stroke="#999" stroke-width="0.6"/><rect x="2" y="2" width="4" height="4" fill="none" stroke="#666" stroke-width="0.7"/></svg></div>
<div style="position:absolute;left:1790px;top:157px;line-height:0"><svg width="8" height="8" viewBox="0 0 8 8"><rect x="0.5" y="0.5" width="7" height="7" rx="1" fill="#cfcfcf" stroke="#999" stroke-width="0.6"/><path d="M2 2 L6 6 M6 2 L2 6" stroke="#333" stroke-width="1"/></svg></div>
<div style="position:absolute;left:1408px;top:179px;line-height:0"><svg width="19" height="18" viewBox="0 0 19 18"><path d="M11.45 5.28 L11.45 6.72 L9.23 7.34 L8.78 8.13 L9.35 10.36 L8.10 11.08 L6.46 9.47 L5.54 9.47 L3.90 11.08 L2.65 10.36 L3.22 8.13 L2.77 7.34 L0.55 6.72 L0.55 5.28 L2.77 4.66 L3.22 3.87 L2.65 1.64 L3.90 0.92 L5.54 2.53 L6.46 2.53 L8.10 0.92 L9.35 1.64 L8.78 3.87 L9.23 4.66 Z" fill="#d01818"/><circle cx="6" cy="6" r="1.5" fill="#fff"/><rect x="8" y="7" width="9" height="7" fill="#444" transform="rotate(-20 12 10)"/><rect x="4" y="11" width="7" height="6" fill="#9ab5d8" transform="rotate(-20 7 14)"/></svg></div>
<div style="position:absolute;left:1433px;top:179px;line-height:0"><svg width="17" height="16" viewBox="0 0 17 16"><path d="M7 1 Q3 1 3 4 V6 H8 V7 H1.5 Q0 7 0 10 Q0 12.5 2 12.5 H4 V10 Q4 8.5 6 8.5 H10 Q11 8.5 11 7 V3.5 Q11 1 7 1 Z" fill="#3b77a8"/><path d="M6 9 L16 9 L11 15 Z" fill="#4a3a1a"/><path d="M3 14 L8 9 L11 15 Z" fill="#f2df5a"/></svg></div>
<div style="position:absolute;left:1456px;top:179px;line-height:0"><svg width="17" height="17" viewBox="0 0 17 17"><circle cx="8.5" cy="8.5" r="7.6" fill="#fff" stroke="#666" stroke-width="1.2"/><path d="M8.5 3.5 V9 L12 12" fill="none" stroke="#555" stroke-width="1.2"/></svg></div>
<div style="position:absolute;left:1481px;top:179px;line-height:0"><svg width="14" height="17" viewBox="0 0 14 17"><path d="M0.5 0.5 H9 L13.5 5 V16.5 H0.5 Z" fill="#fff" stroke="#777" stroke-width="1"/><path d="M9 0.5 V5 H13.5" fill="none" stroke="#777" stroke-width="0.9"/><g stroke="#777" stroke-width="1"><line x1="3" y1="6.5" x2="8" y2="6.5"/><line x1="3" y1="9.5" x2="11" y2="9.5"/><line x1="3" y1="12" x2="11" y2="12"/><line x1="3" y1="14.5" x2="11" y2="14.5"/></g></svg></div>
<div style="position:absolute;left:1513px;top:179px;line-height:0"><svg width="17" height="17" viewBox="0 0 17 17"><rect x="1" y="1" width="10" height="11" fill="#f4e04a" stroke="#c5b02a" stroke-width="0.6"/><path d="M8 6 L11 2 L13 3 V12 L10 16 Z" fill="#f4e04a"/><path d="M11 15 L16 5" stroke="#c9c05a" stroke-width="1.6"/></svg></div>
<div style="position:absolute;left:1545px;top:178px;line-height:0"><svg width="19" height="19" viewBox="0 0 19 19"><g transform="translate(5.5 5.5) scale(1.0)"><path d="M2.5 2.5 L12 12" stroke="#333" stroke-width="4.6" stroke-linecap="round"/><path d="M3.2 3.2 L11.6 11.6" stroke="#e6dc8a" stroke-width="2.4" stroke-linecap="round"/><path d="M-0.33 -3.79 A3.8 3.8 0 1 1 -3.79 -0.33" fill="none" stroke="#333" stroke-width="3.8"/><path d="M-0.33 -3.79 A3.8 3.8 0 1 1 -3.79 -0.33" fill="none" stroke="#f4f4f4" stroke-width="1.8"/></g></svg></div>
<div style="position:absolute;left:1400px;top:204px;width:400px;height:27px;background:#fff;border:1px solid #d9d9d9"></div>
<div style="position:absolute;left:1409px;top:209px;line-height:0"><svg width="18" height="18" viewBox="0 0 18 18"><circle cx="7" cy="7" r="5.8" fill="none" stroke="#666" stroke-width="1.5"/><line x1="11.2" y1="11.2" x2="16.5" y2="16.5" stroke="#666" stroke-width="1.8" stroke-linecap="round"/></svg></div>
<div style="position:absolute;left:1434.2px;top:210.18px;font-size:15.5px;line-height:15.5px;color:#9a9a9a;font-weight:normal;white-space:nowrap;will-change:transform;font-style:italic;transform:scaleX(0.9124);transform-origin:0 0;">Search...</div>
<div style="position:absolute;left:1400px;top:231px;width:400px;height:660px;background:#fff;border:1px solid #d9d9d9"></div>
<div style="position:absolute;left:1401px;top:232px;width:378px;height:22px;background:#ececec"></div>
<div style="position:absolute;left:1409px;top:240.0px;line-height:0"><svg width="12" height="8" viewBox="0 0 12 8"><path d="M0.5 0.5 H11.5 L6 7 Z" fill="#3a3a3a"/></svg></div>
<div style="position:absolute;left:1431px;top:233.0px;line-height:0"><svg width="22" height="22" viewBox="0 0 22 22"><circle cx="11" cy="11" r="9.8" fill="#a9cbec" stroke="#4a6a8a" stroke-width="1.2"/><path d="M10 3.5 V11 L15.5 14.5" fill="none" stroke="#2a4a6a" stroke-width="1.3"/></svg></div>
<div style="position:absolute;left:1457px;top:236.17px;font-size:16.1px;line-height:16.1px;color:#000;font-weight:normal;white-space:nowrap;will-change:transform;transform:scaleX(1.0069);transform-origin:0 0;">Recently used</div>
<div style="position:absolute;left:1460px;top:257.19px;line-height:0"><svg width="21" height="21" viewBox="0 0 21 21"><rect x="1" y="8" width="13" height="12" fill="#6b8aa2"/><circle cx="13.5" cy="7.5" r="6.5" fill="#d7e3cf" stroke="#7a8a70" stroke-width="0.8" stroke-dasharray="1.5 1"/></svg></div>
<div style="position:absolute;left:1485px;top:260.36px;font-size:16.1px;line-height:16.1px;color:#000;font-weight:normal;white-space:nowrap;will-change:transform;transform:scaleX(1.0210);transform-origin:0 0;">Difference</div>
<div style="position:absolute;left:1460px;top:281.38px;line-height:0"><svg width="21" height="21" viewBox="0 0 21 21"><path d="M1 3 Q1 1 3 1 H18 Q20 1 20 3 V8 Q20 10 18 10 H10 V18 Q10 20 8 20 H3 Q1 20 1 18 Z" fill="#6b8aa2"/><path d="M5 17 V5 H16" fill="none" stroke="#9aaeb5" stroke-width="1.5"/></svg></div>
<div style="position:absolute;left:1485px;top:284.55px;font-size:16.1px;line-height:16.1px;color:#000;font-weight:normal;white-space:nowrap;will-change:transform;transform:scaleX(1.0034);transform-origin:0 0;">Buffer</div>
<div style="position:absolute;left:1460px;top:305.57px;line-height:0"><svg width="21" height="21" viewBox="0 0 21 21"><rect x="1" y="8" width="13" height="12" fill="#6b8aa2"/><circle cx="13.5" cy="7.5" r="6.8" fill="#6b8aa2"/></svg></div>
<div style="position:absolute;left:1485px;top:308.74px;font-size:16.1px;line-height:16.1px;color:#000;font-weight:normal;white-space:nowrap;will-change:transform;transform:scaleX(0.9864);transform-origin:0 0;">Dissolve</div>
<div style="position:absolute;left:1460px;top:329.76px;line-height:0"><svg width="21" height="21" viewBox="0 0 21 21"><path d="M20.45 9.52 L20.45 11.48 L17.20 12.53 L16.67 13.80 L18.23 16.84 L16.84 18.23 L13.80 16.67 L12.53 17.20 L11.48 20.45 L9.52 20.45 L8.47 17.20 L7.20 16.67 L4.16 18.23 L2.77 16.84 L4.33 13.80 L3.80 12.53 L0.55 11.48 L0.55 9.52 L3.80 8.47 L4.33 7.20 L2.77 4.16 L4.16 2.77 L7.20 4.33 L8.47 3.80 L9.52 0.55 L11.48 0.55 L12.53 3.80 L13.80 4.33 L16.84 2.77 L18.23 4.16 L16.67 7.20 L17.20 8.47 Z" fill="#7aa6dc" stroke="#4a7cbc" stroke-width="0.8"/><circle cx="10.5" cy="10.5" r="3.3" fill="#fff" stroke="#4a7cbc" stroke-width="0.8"/></svg></div>
<div style="position:absolute;left:1485px;top:332.93px;font-size:16.1px;line-height:16.1px;color:#000;font-weight:normal;white-space:nowrap;will-change:transform;transform:scaleX(1.0464);transform-origin:0 0;">Single sided buffer</div>
<div style="position:absolute;left:1460px;top:353.95px;line-height:0"><svg width="21" height="21" viewBox="0 0 21 21"><path d="M2 18 Q1 11 8 9 Q11 8 12 4 Q14 0 18 2 Q21 5 18 9 Q15 12 10 17 Q6 21 2 18 Z" fill="#c5dcb5" stroke="#8aa" stroke-width="1"/><path d="M3 17 Q5 12 9 11" fill="none" stroke="#5a8a5a" stroke-width="2"/></svg></div>
<div style="position:absolute;left:1485px;top:357.12px;font-size:16.1px;line-height:16.1px;color:#000;font-weight:normal;white-space:nowrap;will-change:transform;transform:scaleX(1.0372);transform-origin:0 0;">Polygons to lines</div>
<div style="position:absolute;left:1411px;top:383.14px;line-height:0"><svg width="8" height="12" viewBox="0 0 8 12"><path d="M1 1 V11 L6.8 6 Z" fill="#4c4c4c"/></svg></div>
<div style="position:absolute;left:1431px;top:378.14px;line-height:0"><svg width="21" height="20" viewBox="0 0 21 20"><circle cx="9.7" cy="9.3" r="7.5" fill="#fff" stroke="#77a232" stroke-width="4.3"/><path d="M10 10 L18.5 18.3" stroke="#4f8a2e" stroke-width="3.4" stroke-linecap="round"/><path d="M10.8 10.2 L17.6 16.8" stroke="#8fd060" stroke-width="1"/><circle cx="9.3" cy="8.8" r="1.9" fill="#e0902a"/><circle cx="10" cy="10" r="1" fill="#f2e060"/></svg></div>
<div style="position:absolute;left:1457px;top:381.31px;font-size:16.1px;line-height:16.1px;color:#000;font-weight:normal;white-space:nowrap;will-change:transform;transform:scaleX(1.0443);transform-origin:0 0;">Cartography</div>
<div style="position:absolute;left:1411px;top:407.33000000000004px;line-height:0"><svg width="8" height="12" viewBox="0 0 8 12"><path d="M1 1 V11 L6.8 6 Z" fill="#4c4c4c"/></svg></div>
<div style="position:absolute;left:1431px;top:402.33000000000004px;line-height:0"><svg width="21" height="20" viewBox="0 0 21 20"><circle cx="9.7" cy="9.3" r="7.5" fill="#fff" stroke="#77a232" stroke-width="4.3"/><path d="M10 10 L18.5 18.3" stroke="#4f8a2e" stroke-width="3.4" stroke-linecap="round"/><path d="M10.8 10.2 L17.6 16.8" stroke="#8fd060" stroke-width="1"/><circle cx="9.3" cy="8.8" r="1.9" fill="#e0902a"/><circle cx="10" cy="10" r="1" fill="#f2e060"/></svg></div>
<div style="position:absolute;left:1457px;top:405.50px;font-size:16.1px;line-height:16.1px;color:#000;font-weight:normal;white-space:nowrap;will-change:transform;transform:scaleX(0.9868);transform-origin:0 0;">Database</div>
<div style="position:absolute;left:1411px;top:431.52px;line-height:0"><svg width="8" height="12" viewBox="0 0 8 12"><path d="M1 1 V11 L6.8 6 Z" fill="#4c4c4c"/></svg></div>
<div style="position:absolute;left:1431px;top:426.52px;line-height:0"><svg width="21" height="20" viewBox="0 0 21 20"><circle cx="9.7" cy="9.3" r="7.5" fill="#fff" stroke="#77a232" stroke-width="4.3"/><path d="M10 10 L18.5 18.3" stroke="#4f8a2e" stroke-width="3.4" stroke-linecap="round"/><path d="M10.8 10.2 L17.6 16.8" stroke="#8fd060" stroke-width="1"/><circle cx="9.3" cy="8.8" r="1.9" fill="#e0902a"/><circle cx="10" cy="10" r="1" fill="#f2e060"/></svg></div>
<div style="position:absolute;left:1457px;top:429.69px;font-size:16.1px;line-height:16.1px;color:#000;font-weight:normal;white-space:nowrap;will-change:transform;transform:scaleX(1.0232);transform-origin:0 0;">File tools</div>
<div style="position:absolute;left:1411px;top:455.71000000000004px;line-height:0"><svg width="8" height="12" viewBox="0 0 8 12"><path d="M1 1 V11 L6.8 6 Z" fill="#4c4c4c"/></svg></div>
<div style="position:absolute;left:1431px;top:450.71000000000004px;line-height:0"><svg width="21" height="20" viewBox="0 0 21 20"><circle cx="9.7" cy="9.3" r="7.5" fill="#fff" stroke="#77a232" stroke-width="4.3"/><path d="M10 10 L18.5 18.3" stroke="#4f8a2e" stroke-width="3.4" stroke-linecap="round"/><path d="M10.8 10.2 L17.6 16.8" stroke="#8fd060" stroke-width="1"/><circle cx="9.3" cy="8.8" r="1.9" fill="#e0902a"/><circle cx="10" cy="10" r="1" fill="#f2e060"/></svg></div>
<div style="position:absolute;left:1457px;top:453.88px;font-size:16.1px;line-height:16.1px;color:#000;font-weight:normal;white-space:nowrap;will-change:transform;transform:scaleX(1.0689);transform-origin:0 0;">Interpolation</div>
<div style="position:absolute;left:1411px;top:479.9px;line-height:0"><svg width="8" height="12" viewBox="0 0 8 12"><path d="M1 1 V11 L6.8 6 Z" fill="#4c4c4c"/></svg></div>
<div style="position:absolute;left:1431px;top:474.9px;line-height:0"><svg width="21" height="20" viewBox="0 0 21 20"><circle cx="9.7" cy="9.3" r="7.5" fill="#fff" stroke="#77a232" stroke-width="4.3"/><path d="M10 10 L18.5 18.3" stroke="#4f8a2e" stroke-width="3.4" stroke-linecap="round"/><path d="M10.8 10.2 L17.6 16.8" stroke="#8fd060" stroke-width="1"/><circle cx="9.3" cy="8.8" r="1.9" fill="#e0902a"/><circle cx="10" cy="10" r="1" fill="#f2e060"/></svg></div>
<div style="position:absolute;left:1457px;top:478.07px;font-size:16.1px;line-height:16.1px;color:#000;font-weight:normal;white-space:nowrap;will-change:transform;transform:scaleX(1.0161);transform-origin:0 0;">Layer tools</div>
<div style="position:absolute;left:1411px;top:504.09000000000003px;line-height:0"><svg width="8" height="12" viewBox="0 0 8 12"><path d="M1 1 V11 L6.8 6 Z" fill="#4c4c4c"/></svg></div>
<div style="position:absolute;left:1431px;top:499.09000000000003px;line-height:0"><svg width="21" height="20" viewBox="0 0 21 20"><circle cx="9.7" cy="9.3" r="7.5" fill="#fff" stroke="#77a232" stroke-width="4.3"/><path d="M10 10 L18.5 18.3" stroke="#4f8a2e" stroke-width="3.4" stroke-linecap="round"/><path d="M10.8 10.2 L17.6 16.8" stroke="#8fd060" stroke-width="1"/><circle cx="9.3" cy="8.8" r="1.9" fill="#e0902a"/><circle cx="10" cy="10" r="1" fill="#f2e060"/></svg></div>
<div style="position:absolute;left:1457px;top:502.26px;font-size:16.1px;line-height:16.1px;color:#000;font-weight:normal;white-space:nowrap;will-change:transform;transform:scaleX(1.0137);transform-origin:0 0;">Mesh</div>
<div style="position:absolute;left:1411px;top:528.28px;line-height:0"><svg width="8" height="12" viewBox="0 0 8 12"><path d="M1 1 V11 L6.8 6 Z" fill="#4c4c4c"/></svg></div>
<div style="position:absolute;left:1431px;top:523.28px;line-height:0"><svg width="21" height="20" viewBox="0 0 21 20"><circle cx="9.7" cy="9.3" r="7.5" fill="#fff" stroke="#77a232" stroke-width="4.3"/><path d="M10 10 L18.5 18.3" stroke="#4f8a2e" stroke-width="3.4" stroke-linecap="round"/><path d="M10.8 10.2 L17.6 16.8" stroke="#8fd060" stroke-width="1"/><circle cx="9.3" cy="8.8" r="1.9" fill="#e0902a"/><circle cx="10" cy="10" r="1" fill="#f2e060"/></svg></div>
<div style="position:absolute;left:1457px;top:526.45px;font-size:16.1px;line-height:16.1px;color:#000;font-weight:normal;white-space:nowrap;will-change:transform;transform:scaleX(1.0227);transform-origin:0 0;">Network analysis</div>
<div style="position:absolute;left:1411px;top:552.47px;line-height:0"><svg width="8" height="12" viewBox="0 0 8 12"><path d="M1 1 V11 L6.8 6 Z" fill="#4c4c4c"/></svg></div>
<div style="position:absolute;left:1431px;top:547.47px;line-height:0"><svg width="21" height="20" viewBox="0 0 21 20"><circle cx="9.7" cy="9.3" r="7.5" fill="#fff" stroke="#77a232" stroke-width="4.3"/><path d="M10 10 L18.5 18.3" stroke="#4f8a2e" stroke-width="3.4" stroke-linecap="round"/><path d="M10.8 10.2 L17.6 16.8" stroke="#8fd060" stroke-width="1"/><circle cx="9.3" cy="8.8" r="1.9" fill="#e0902a"/><circle cx="10" cy="10" r="1" fill="#f2e060"/></svg></div>
<div style="position:absolute;left:1457px;top:550.64px;font-size:16.1px;line-height:16.1px;color:#000;font-weight:normal;white-space:nowrap;will-change:transform;transform:scaleX(0.9921);transform-origin:0 0;">Plots</div>
<div style="position:absolute;left:1411px;top:576.6600000000001px;line-height:0"><svg width="8" height="12" viewBox="0 0 8 12"><path d="M1 1 V11 L6.8 6 Z" fill="#4c4c4c"/></svg></div>
<div style="position:absolute;left:1431px;top:571.6600000000001px;line-height:0"><svg width="21" height="20" viewBox="0 0 21 20"><circle cx="9.7" cy="9.3" r="7.5" fill="#fff" stroke="#77a232" stroke-width="4.3"/><path d="M10 10 L18.5 18.3" stroke="#4f8a2e" stroke-width="3.4" stroke-linecap="round"/><path d="M10.8 10.2 L17.6 16.8" stroke="#8fd060" stroke-width="1"/><circle cx="9.3" cy="8.8" r="1.9" fill="#e0902a"/><circle cx="10" cy="10" r="1" fill="#f2e060"/></svg></div>
<div style="position:absolute;left:1457px;top:574.83px;font-size:16.1px;line-height:16.1px;color:#000;font-weight:normal;white-space:nowrap;will-change:transform;transform:scaleX(0.9725);transform-origin:0 0;">Raster analysis</div>
<div style="position:absolute;left:1411px;top:600.85px;line-height:0"><svg width="8" height="12" viewBox="0 0 8 12"><path d="M1 1 V11 L6.8 6 Z" fill="#4c4c4c"/></svg></div>
<div style="position:absolute;left:1431px;top:595.85px;line-height:0"><svg width="21" height="20" viewBox="0 0 21 20"><circle cx="9.7" cy="9.3" r="7.5" fill="#fff" stroke="#77a232" stroke-width="4.3"/><path d="M10 10 L18.5 18.3" stroke="#4f8a2e" stroke-width="3.4" stroke-linecap="round"/><path d="M10.8 10.2 L17.6 16.8" stroke="#8fd060" stroke-width="1"/><circle cx="9.3" cy="8.8" r="1.9" fill="#e0902a"/><circle cx="10" cy="10" r="1" fill="#f2e060"/></svg></div>
<div style="position:absolute;left:1457px;top:599.02px;font-size:16.1px;line-height:16.1px;color:#000;font-weight:normal;white-space:nowrap;will-change:transform;transform:scaleX(1.0097);transform-origin:0 0;">Raster creation</div>
<div style="position:absolute;left:1411px;top:625.04px;line-height:0"><svg width="8" height="12" viewBox="0 0 8 12"><path d="M1 1 V11 L6.8 6 Z" fill="#4c4c4c"/></svg></div>
<div style="position:absolute;left:1431px;top:620.04px;line-height:0"><svg width="21" height="20" viewBox="0 0 21 20"><circle cx="9.7" cy="9.3" r="7.5" fill="#fff" stroke="#77a232" stroke-width="4.3"/><path d="M10 10 L18.5 18.3" stroke="#4f8a2e" stroke-width="3.4" stroke-linecap="round"/><path d="M10.8 10.2 L17.6 16.8" stroke="#8fd060" stroke-width="1"/><circle cx="9.3" cy="8.8" r="1.9" fill="#e0902a"/><circle cx="10" cy="10" r="1" fill="#f2e060"/></svg></div>
<div style="position:absolute;left:1457px;top:623.21px;font-size:16.1px;line-height:16.1px;color:#000;font-weight:normal;white-space:nowrap;will-change:transform;transform:scaleX(0.9981);transform-origin:0 0;">Raster terrain analysis</div>
<div style="position:absolute;left:1411px;top:649.23px;line-height:0"><svg width="8" height="12" viewBox="0 0 8 12"><path d="M1 1 V11 L6.8 6 Z" fill="#4c4c4c"/></svg></div>
<div style="position:absolute;left:1431px;top:644.23px;line-height:0"><svg width="21" height="20" viewBox="0 0 21 20"><circle cx="9.7" cy="9.3" r="7.5" fill="#fff" stroke="#77a232" stroke-width="4.3"/><path d="M10 10 L18.5 18.3" stroke="#4f8a2e" stroke-width="3.4" stroke-linecap="round"/><path d="M10.8 10.2 L17.6 16.8" stroke="#8fd060" stroke-width="1"/><circle cx="9.3" cy="8.8" r="1.9" fill="#e0902a"/><circle cx="10" cy="10" r="1" fill="#f2e060"/></svg></div>
<div style="position:absolute;left:1457px;top:647.40px;font-size:16.1px;line-height:16.1px;color:#000;font-weight:normal;white-space:nowrap;will-change:transform;transform:scaleX(1.0178);transform-origin:0 0;">Raster tools</div>
<div style="position:absolute;left:1411px;top:673.4200000000001px;line-height:0"><svg width="8" height="12" viewBox="0 0 8 12"><path d="M1 1 V11 L6.8 6 Z" fill="#4c4c4c"/></svg></div>
<div style="position:absolute;left:1431px;top:668.4200000000001px;line-height:0"><svg width="21" height="20" viewBox="0 0 21 20"><circle cx="9.7" cy="9.3" r="7.5" fill="#fff" stroke="#77a232" stroke-width="4.3"/><path d="M10 10 L18.5 18.3" stroke="#4f8a2e" stroke-width="3.4" stroke-linecap="round"/><path d="M10.8 10.2 L17.6 16.8" stroke="#8fd060" stroke-width="1"/><circle cx="9.3" cy="8.8" r="1.9" fill="#e0902a"/><circle cx="10" cy="10" r="1" fill="#f2e060"/></svg></div>
<div style="position:absolute;left:1457px;top:671.59px;font-size:16.1px;line-height:16.1px;color:#000;font-weight:normal;white-space:nowrap;will-change:transform;transform:scaleX(1.0079);transform-origin:0 0;">Vector analysis</div>
<div style="position:absolute;left:1411px;top:697.61px;line-height:0"><svg width="8" height="12" viewBox="0 0 8 12"><path d="M1 1 V11 L6.8 6 Z" fill="#4c4c4c"/></svg></div>
<div style="position:absolute;left:1431px;top:692.61px;line-height:0"><svg width="21" height="20" viewBox="0 0 21 20"><circle cx="9.7" cy="9.3" r="7.5" fill="#fff" stroke="#77a232" stroke-width="4.3"/><path d="M10 10 L18.5 18.3" stroke="#4f8a2e" stroke-width="3.4" stroke-linecap="round"/><path d="M10.8 10.2 L17.6 16.8" stroke="#8fd060" stroke-width="1"/><circle cx="9.3" cy="8.8" r="1.9" fill="#e0902a"/><circle cx="10" cy="10" r="1" fill="#f2e060"/></svg></div>
<div style="position:absolute;left:1457px;top:695.78px;font-size:16.1px;line-height:16.1px;color:#000;font-weight:normal;white-space:nowrap;will-change:transform;transform:scaleX(1.0423);transform-origin:0 0;">Vector creation</div>
<div style="position:absolute;left:1411px;top:721.8px;line-height:0"><svg width="8" height="12" viewBox="0 0 8 12"><path d="M1 1 V11 L6.8 6 Z" fill="#4c4c4c"/></svg></div>
<div style="position:absolute;left:1431px;top:716.8px;line-height:0"><svg width="21" height="20" viewBox="0 0 21 20"><circle cx="9.7" cy="9.3" r="7.5" fill="#fff" stroke="#77a232" stroke-width="4.3"/><path d="M10 10 L18.5 18.3" stroke="#4f8a2e" stroke-width="3.4" stroke-linecap="round"/><path d="M10.8 10.2 L17.6 16.8" stroke="#8fd060" stroke-width="1"/><circle cx="9.3" cy="8.8" r="1.9" fill="#e0902a"/><circle cx="10" cy="10" r="1" fill="#f2e060"/></svg></div>
<div style="position:absolute;left:1457px;top:719.97px;font-size:16.1px;line-height:16.1px;color:#000;font-weight:normal;white-space:nowrap;will-change:transform;transform:scaleX(1.0337);transform-origin:0 0;">Vector general</div>
<div style="position:absolute;left:1411px;top:745.99px;line-height:0"><svg width="8" height="12" viewBox="0 0 8 12"><path d="M1 1 V11 L6.8 6 Z" fill="#4c4c4c"/></svg></div>
<div style="position:absolute;left:1431px;top:740.99px;line-height:0"><svg width="21" height="20" viewBox="0 0 21 20"><circle cx="9.7" cy="9.3" r="7.5" fill="#fff" stroke="#77a232" stroke-width="4.3"/><path d="M10 10 L18.5 18.3" stroke="#4f8a2e" stroke-width="3.4" stroke-linecap="round"/><path d="M10.8 10.2 L17.6 16.8" stroke="#8fd060" stroke-width="1"/><circle cx="9.3" cy="8.8" r="1.9" fill="#e0902a"/><circle cx="10" cy="10" r="1" fill="#f2e060"/></svg></div>
<div style="position:absolute;left:1457px;top:744.16px;font-size:16.1px;line-height:16.1px;color:#000;font-weight:normal;white-space:nowrap;will-change:transform;transform:scaleX(1.0598);transform-origin:0 0;">Vector geometry</div>
<div style="position:absolute;left:1411px;top:770.1800000000001px;line-height:0"><svg width="8" height="12" viewBox="0 0 8 12"><path d="M1 1 V11 L6.8 6 Z" fill="#4c4c4c"/></svg></div>
<div style="position:absolute;left:1431px;top:765.1800000000001px;line-height:0"><svg width="21" height="20" viewBox="0 0 21 20"><circle cx="9.7" cy="9.3" r="7.5" fill="#fff" stroke="#77a232" stroke-width="4.3"/><path d="M10 10 L18.5 18.3" stroke="#4f8a2e" stroke-width="3.4" stroke-linecap="round"/><path d="M10.8 10.2 L17.6 16.8" stroke="#8fd060" stroke-width="1"/><circle cx="9.3" cy="8.8" r="1.9" fill="#e0902a"/><circle cx="10" cy="10" r="1" fill="#f2e060"/></svg></div>
<div style="position:absolute;left:1457px;top:768.35px;font-size:16.1px;line-height:16.1px;color:#000;font-weight:normal;white-space:nowrap;will-change:transform;transform:scaleX(1.0355);transform-origin:0 0;">Vector overlay</div>
<div style="position:absolute;left:1411px;top:794.37px;line-height:0"><svg width="8" height="12" viewBox="0 0 8 12"><path d="M1 1 V11 L6.8 6 Z" fill="#4c4c4c"/></svg></div>
<div style="position:absolute;left:1431px;top:789.37px;line-height:0"><svg width="21" height="20" viewBox="0 0 21 20"><circle cx="9.7" cy="9.3" r="7.5" fill="#fff" stroke="#77a232" stroke-width="4.3"/><path d="M10 10 L18.5 18.3" stroke="#4f8a2e" stroke-width="3.4" stroke-linecap="round"/><path d="M10.8 10.2 L17.6 16.8" stroke="#8fd060" stroke-width="1"/><circle cx="9.3" cy="8.8" r="1.9" fill="#e0902a"/><circle cx="10" cy="10" r="1" fill="#f2e060"/></svg></div>
<div style="position:absolute;left:1457px;top:792.54px;font-size:16.1px;line-height:16.1px;color:#000;font-weight:normal;white-space:nowrap;will-change:transform;transform:scaleX(1.0403);transform-origin:0 0;">Vector selection</div>
<div style="position:absolute;left:1411px;top:818.5600000000001px;line-height:0"><svg width="8" height="12" viewBox="0 0 8 12"><path d="M1 1 V11 L6.8 6 Z" fill="#4c4c4c"/></svg></div>
<div style="position:absolute;left:1431px;top:813.5600000000001px;line-height:0"><svg width="21" height="20" viewBox="0 0 21 20"><circle cx="9.7" cy="9.3" r="7.5" fill="#fff" stroke="#77a232" stroke-width="4.3"/><path d="M10 10 L18.5 18.3" stroke="#4f8a2e" stroke-width="3.4" stroke-linecap="round"/><path d="M10.8 10.2 L17.6 16.8" stroke="#8fd060" stroke-width="1"/><circle cx="9.3" cy="8.8" r="1.9" fill="#e0902a"/><circle cx="10" cy="10" r="1" fill="#f2e060"/></svg></div>
<div style="position:absolute;left:1457px;top:816.73px;font-size:16.1px;line-height:16.1px;color:#000;font-weight:normal;white-space:nowrap;will-change:transform;transform:scaleX(1.0494);transform-origin:0 0;">Vector table</div>
<div style="position:absolute;left:1411px;top:842.75px;line-height:0"><svg width="8" height="12" viewBox="0 0 8 12"><path d="M1 1 V11 L6.8 6 Z" fill="#4c4c4c"/></svg></div>
<div style="position:absolute;left:1431px;top:837.75px;line-height:0"><svg width="21" height="20" viewBox="0 0 21 20"><circle cx="9.7" cy="9.3" r="7.5" fill="#fff" stroke="#77a232" stroke-width="4.3"/><path d="M10 10 L18.5 18.3" stroke="#4f8a2e" stroke-width="3.4" stroke-linecap="round"/><path d="M10.8 10.2 L17.6 16.8" stroke="#8fd060" stroke-width="1"/><circle cx="9.3" cy="8.8" r="1.9" fill="#e0902a"/><circle cx="10" cy="10" r="1" fill="#f2e060"/></svg></div>
<div style="position:absolute;left:1457px;top:840.92px;font-size:16.1px;line-height:16.1px;color:#000;font-weight:normal;white-space:nowrap;will-change:transform;transform:scaleX(1.0353);transform-origin:0 0;">Vector tiles</div>
<div style="position:absolute;left:1411px;top:866.94px;line-height:0"><svg width="8" height="12" viewBox="0 0 8 12"><path d="M1 1 V11 L6.8 6 Z" fill="#4c4c4c"/></svg></div>
<div style="position:absolute;left:1431px;top:861.94px;line-height:0"><svg width="22" height="24" viewBox="0 0 22 24"><circle cx="14" cy="11" r="6.8" fill="#5fb3e3"/><path d="M11 7 Q14 5 16 8 L13 12 Z" fill="#3d8a3d"/><path d="M1 5.5 L11 0.5" stroke="#333" stroke-width="1.4"/><rect x="4.5" y="1.5" width="3.5" height="3" fill="#111" transform="rotate(-27 6 3)"/><text x="1" y="22" font-family="Liberation Sans" font-weight="bold" font-size="9.5" fill="#111" stroke="#111" stroke-width="0.5" textLength="20" lengthAdjust="spacingAndGlyphs">GDAL</text></svg></div>
<div style="position:absolute;left:1457px;top:865.11px;font-size:16.1px;line-height:16.1px;color:#000;font-weight:normal;white-space:nowrap;will-change:transform;transform:scaleX(0.9423);transform-origin:0 0;">GDAL</div>
<svg style="position:absolute;left:1435px;top:885px" width="13" height="6"><path d="M1.5 6 L6.5 1 L11.5 6" fill="none" stroke="#444" stroke-width="1.2"/><path d="M5 6.5 L6.5 5 L8 6.5" fill="#5a9a5a"/></svg>
<div style="position:absolute;left:1779px;top:232px;width:20px;height:659px;background:linear-gradient(90deg,#fdfdfd,#f4f4f4 60%,#fafafa);border-left:1px solid #dedede"></div>
<div style="position:absolute;left:1780px;top:232px;width:19px;height:19px;background:#fff;border-bottom:1px solid #e2e2e2"></div>
<div style="position:absolute;left:1780px;top:871px;width:19px;height:19px;background:#fff"></div>
<div style="position:absolute;left:1784px;top:237px;line-height:0"><svg width="12" height="8" viewBox="0 0 12 8"><path d="M0.5 6.8 L5.8 0.5 L11 6.8 Z" fill="#444"/></svg></div>
<div style="position:absolute;left:1784px;top:877.5px;line-height:0"><svg width="12" height="8" viewBox="0 0 12 8"><path d="M0.5 0.5 L5.8 6.8 L11 0.5 Z" fill="#444"/></svg></div>
<div style="position:absolute;left:1780px;top:828px;width:19px;height:43px;background:#e3e3e3;border-top:1px solid #d2d2d2;border-bottom:1px solid #d8d8d8"></div>
<div style="position:absolute;left:0px;top:891px;width:1800px;height:32px;background:#f0f0f0"></div>
<div style="position:absolute;left:0px;top:921.5px;width:1800px;height:1.5px;background:#c4c4c4"></div>
<div style="position:absolute;left:2.5px;top:895px;width:274px;height:25px;background:#fff;border:1px solid #dcdcdc;border-radius:1px"></div>
<div style="position:absolute;left:11px;top:899px;line-height:0"><svg width="18" height="18" viewBox="0 0 18 18"><circle cx="7" cy="7" r="5.8" fill="none" stroke="#666" stroke-width="1.5"/><line x1="11.2" y1="11.2" x2="16.5" y2="16.5" stroke="#666" stroke-width="1.8" stroke-linecap="round"/></svg></div>
<div style="position:absolute;left:35.8px;top:900.65px;font-size:15.3px;line-height:15.3px;color:#7a7a7a;font-weight:normal;white-space:nowrap;will-change:transform;transform:scaleX(0.9993);transform-origin:0 0;">Type to locate (Ctrl+K)</div>
<div style="position:absolute;left:282.5px;top:900.86px;font-size:15.05px;line-height:15.05px;color:#000;font-weight:normal;white-space:nowrap;will-change:transform;transform:scaleX(1.0004);transform-origin:0 0;">Pan distance 13.616 m (90°E)</div>
<div style="position:absolute;left:834px;top:900.90px;font-size:15px;line-height:15px;color:#000;font-weight:normal;white-space:nowrap;will-change:transform;transform:scaleX(0.9756);transform-origin:0 0;">Coordinate</div>
<div style="position:absolute;left:908px;top:894.5px;width:161px;height:24.5px;background:#fff;border:1px solid #dcdcdc"></div>
<div style="position:absolute;left:912px;top:900.56px;font-size:15.4px;line-height:15.4px;color:#000;font-weight:normal;white-space:nowrap;will-change:transform;transform:scaleX(1.0044);transform-origin:0 0;">1148116.4,-4277316.1</div>
<div style="position:absolute;left:1073px;top:895px;line-height:0"><svg width="22" height="24" viewBox="0 0 22 24"><path d="M2.5 4 Q6 0.5 10 3 L14 12 Q16 19 11.5 21.5 Q5.5 24 4.5 17 Z" fill="#fff" stroke="#222" stroke-width="2.2"/><path d="M6 3 L9 10" stroke="#222" stroke-width="2"/><circle cx="12" cy="17.5" r="2.6" fill="none" stroke="#222" stroke-width="1.6"/><circle cx="12" cy="17.5" r="0.9" fill="#222"/><g fill="#333"><circle cx="18" cy="2.5" r="1"/><circle cx="15.5" cy="5" r="0.9"/><circle cx="13" cy="3" r="0.8"/><circle cx="2" cy="19" r="0.8"/></g></svg></div>
<div style="position:absolute;left:1102.4px;top:900.90px;font-size:15px;line-height:15px;color:#000;font-weight:normal;white-space:nowrap;will-change:transform;transform:scaleX(0.9192);transform-origin:0 0;">Scale</div>
<div style="position:absolute;left:1138px;top:894.5px;width:101px;height:25px;background:#fff;border:1px solid #dcdcdc"></div>
<div style="position:absolute;left:1140.7px;top:900.65px;font-size:15.3px;line-height:15.3px;color:#000;font-weight:normal;white-space:nowrap;will-change:transform;transform:scaleX(1.0108);transform-origin:0 0;">1:2578</div>
<div style="position:absolute;left:1212px;top:895.5px;width:26px;height:23px;background:#f6f6f6"></div>
<div style="position:absolute;left:1218.5px;top:903.5px;line-height:0"><svg width="13" height="9" viewBox="0 0 13 9"><path d="M0.5 0.5 H12.5 L6.5 8 Z" fill="#444"/></svg></div>
<div style="position:absolute;left:1248px;top:896px;line-height:0"><svg width="19" height="23" viewBox="0 0 19 23"><path d="M4.5 10 V6.5 Q4.5 1.5 9.5 1.5 Q14.5 1.5 14.5 6.5 V10" fill="none" stroke="#6f6f6f" stroke-width="2.4"/><rect x="1" y="10" width="17" height="12.5" rx="1.5" fill="#6f6f6f"/></svg></div>
<div style="position:absolute;left:1272px;top:900.65px;font-size:15.3px;line-height:15.3px;color:#000;font-weight:normal;white-space:nowrap;will-change:transform;transform:scaleX(0.9774);transform-origin:0 0;">Magnifier</div>
<div style="position:absolute;left:1335px;top:894px;width:90px;height:26px;background:#fff;border:1px solid #dcdcdc"></div>
<div style="position:absolute;left:1338.6px;top:900.65px;font-size:15.3px;line-height:15.3px;color:#000;font-weight:normal;white-space:nowrap;will-change:transform;transform:scaleX(0.9968);transform-origin:0 0;">100%</div>
<div style="position:absolute;left:1408px;top:895px;line-height:0"><svg width="14" height="24" viewBox="0 0 14 24"><path d="M1.5 9 L7 2 L12.5 9 Z" fill="#555"/><path d="M1.5 15 L7 22 L12.5 15 Z" fill="#555"/><line x1="0" y1="0" x2="0" y2="24" stroke="#e0e0e0"/></svg></div>
<div style="position:absolute;left:1431px;top:900.65px;font-size:15.3px;line-height:15.3px;color:#000;font-weight:normal;white-space:nowrap;will-change:transform;transform:scaleX(0.9740);transform-origin:0 0;">Rotation</div>
<div style="position:absolute;left:1492.5px;top:894px;width:75px;height:26px;background:#fff;border:1px solid #dcdcdc"></div>
<div style="position:absolute;left:1495.5px;top:900.65px;font-size:15.3px;line-height:15.3px;color:#000;font-weight:normal;white-space:nowrap;will-change:transform;transform:scaleX(1.0430);transform-origin:0 0;">0.0 °</div>
<div style="position:absolute;left:1551px;top:895px;line-height:0"><svg width="14" height="24" viewBox="0 0 14 24"><path d="M1.5 9 L7 2 L12.5 9 Z" fill="#555"/><path d="M1.5 15 L7 22 L12.5 15 Z" fill="#555"/><line x1="0" y1="0" x2="0" y2="24" stroke="#e0e0e0"/></svg></div>
<div style="position:absolute;left:1572px;top:894px;width:19.5px;height:25px;background:#fff;border:1px solid #dcdcdc"></div>
<div style="position:absolute;left:1572px;top:895.5px;line-height:0"><svg width="19" height="19" viewBox="0 0 19 19"><path d="M2.9 9.4 L8.6 16.4 L16.1 3" fill="none" stroke="#000" stroke-width="2.5" stroke-linecap="round" stroke-linejoin="round"/></svg></div>
<div style="position:absolute;left:1600.5px;top:900.65px;font-size:15.3px;line-height:15.3px;color:#000;font-weight:normal;white-space:nowrap;will-change:transform;transform:scaleX(0.9268);transform-origin:0 0;">Render</div>
<div style="position:absolute;left:1656px;top:899px;line-height:0"><svg width="16" height="16" viewBox="0 0 16 16"><circle cx="8" cy="8" r="6.8" fill="none" stroke="#666" stroke-width="1.1"/><path d="M1.5 8 H14.5 M8 1.2 V14.8 M2.8 4.5 H13.2 M2.8 11.5 H13.2" stroke="#666" stroke-width="0.9"/><ellipse cx="8" cy="8" rx="3.3" ry="6.8" fill="none" stroke="#666" stroke-width="0.9"/></svg></div>
<div style="position:absolute;left:1673.4px;top:900.65px;font-size:15.3px;line-height:15.3px;color:#000;font-weight:normal;white-space:nowrap;will-change:transform;transform:scaleX(0.9171);transform-origin:0 0;">EPSG:4978</div>
<div style="position:absolute;left:1776px;top:898px;line-height:0"><svg width="18" height="17" viewBox="0 0 18 17"><path d="M9 1.5 Q17 1.5 17 7.5 Q17 13 9 13 L4 16 L5 12 Q1 11 1 7.5 Q1 1.5 9 1.5 Z" fill="#555"/><circle cx="5.5" cy="7.5" r="1.2" fill="#fff"/><circle cx="9" cy="7.5" r="1.2" fill="#fff"/><circle cx="12.5" cy="7.5" r="1.2" fill="#fff"/></svg></div>
</body></html>
